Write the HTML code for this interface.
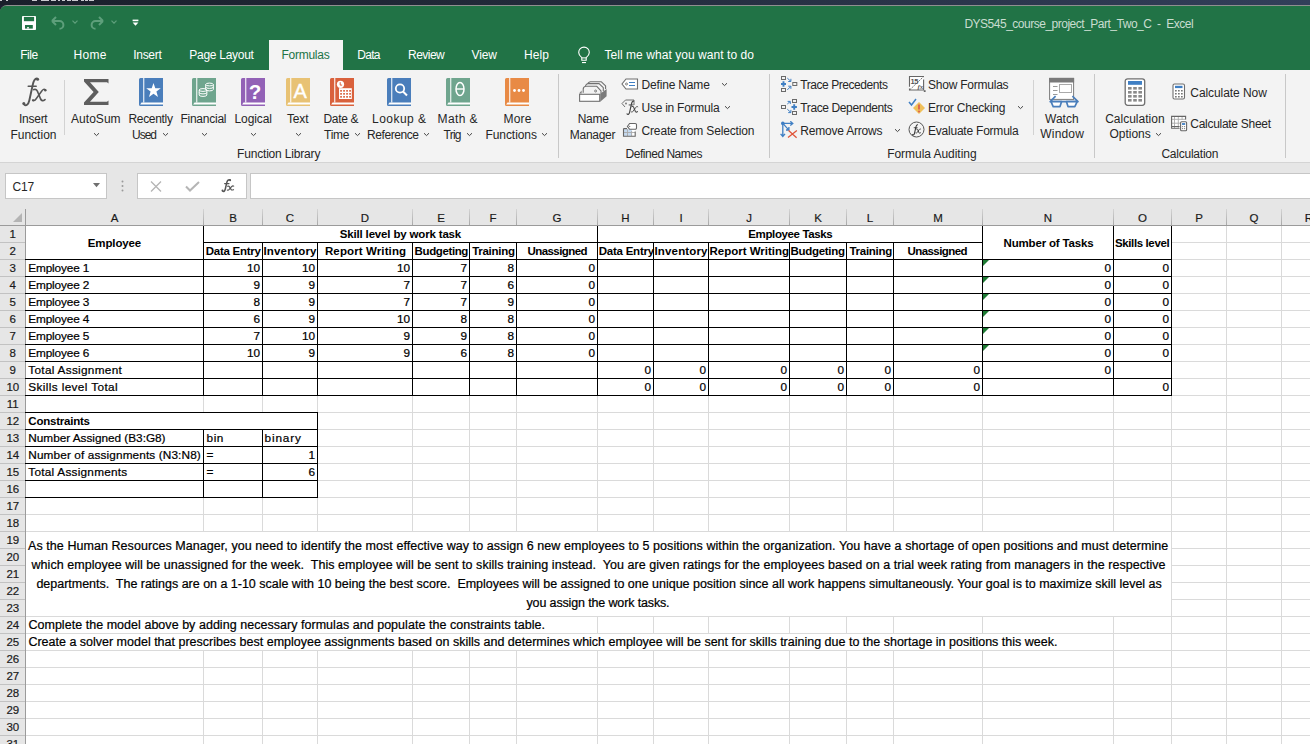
<!DOCTYPE html>
<html><head><meta charset="utf-8"><style>
html,body{margin:0;padding:0;}
body{width:1310px;height:744px;overflow:hidden;position:relative;background:#fff;font-family:"Liberation Sans",sans-serif;}
.t{position:absolute;white-space:pre;line-height:1;}
.r{position:absolute;display:block;}
</style></head><body>
<div class="r" style="left:0px;top:0px;width:1310px;height:5px;background:linear-gradient(90deg,#1a1f2b 0%,#222a3a 40%,#323f5a 100%);"></div>
<div class="r" style="left:0px;top:5px;width:12px;height:12px;background:#1b2030;"></div>
<div class="r" style="left:0;top:5px;width:1310px;height:65px;background:#217346;border-top:1px solid #8f8f8f;box-sizing:border-box;border-top-left-radius:7px;"></div>
<div class="r" style="left:0;top:6px;width:1310px;height:64px;background:#217346;border-top-left-radius:6px;"></div>
<div class="r" style="left:0px;top:0px;width:2px;height:1px;background:#c9c9cf;"></div>
<div class="r" style="left:6px;top:0px;width:2px;height:1px;background:#c9c9cf;"></div>
<div class="r" style="left:32px;top:0px;width:5px;height:1px;background:#c9c9cf;"></div>
<div class="r" style="left:41px;top:0px;width:8px;height:1px;background:#c9c9cf;"></div>
<div class="r" style="left:51px;top:0px;width:5px;height:1px;background:#c9c9cf;"></div>
<div class="r" style="left:58px;top:0px;width:2px;height:1px;background:#c9c9cf;"></div>
<div class="r" style="left:62px;top:0px;width:3px;height:1px;background:#c9c9cf;"></div>
<div class="r" style="left:67px;top:0px;width:4px;height:1px;background:#c9c9cf;"></div>
<div class="r" style="left:72px;top:0px;width:6px;height:1px;background:#c9c9cf;"></div>
<div class="r" style="left:81px;top:0px;width:3px;height:1px;background:#c9c9cf;"></div>
<div class="r" style="left:85px;top:0px;width:3px;height:1px;background:#c9c9cf;"></div>
<div class="r" style="left:89px;top:0px;width:5px;height:1px;background:#c9c9cf;"></div>
<svg class="r" style="left:22px;top:16px" width="14" height="14" viewBox="0 0 14 14"><rect x="0" y="0" width="14" height="14" rx="0.8" fill="#fff"/><rect x="1.9" y="0.9" width="10.2" height="4.3" fill="#217346"/><rect x="3" y="9" width="7.8" height="3.6" fill="#217346"/><rect x="5.2" y="11" width="1.6" height="1.6" fill="#fff"/></svg>
<svg class="r" style="left:50px;top:15px" width="16" height="15" viewBox="0 0 16 15"><path d="M2,6 L6,2 M2,6 L6,10 M2,6 H9.5 A3.9,3.9 0 0 1 9.5,13.8" fill="none" stroke="#5e9f7b" stroke-width="2"/></svg>
<svg class="r" style="left:72px;top:20px" width="6" height="4" viewBox="0 0 6 4"><path d="M0.5,0.7 L3,3.2 L5.5,0.7" fill="none" stroke="#5e9f7b" stroke-width="1.2"/></svg>
<svg class="r" style="left:89px;top:15px" width="16" height="15" viewBox="0 0 16 15"><path d="M14,6 L10,2 M14,6 L10,10 M14,6 H6.5 A3.9,3.9 0 0 0 6.5,13.8" fill="none" stroke="#5e9f7b" stroke-width="2"/></svg>
<svg class="r" style="left:111px;top:20px" width="6" height="4" viewBox="0 0 6 4"><path d="M0.5,0.7 L3,3.2 L5.5,0.7" fill="none" stroke="#5e9f7b" stroke-width="1.2"/></svg>
<svg class="r" style="left:132px;top:19px" width="7" height="8" viewBox="0 0 7 8"><rect x="0.6" y="0.6" width="5.8" height="1.6" fill="#fff"/><path d="M0.6,3.4 H6.4 L3.5,6.8 Z" fill="#fff"/></svg>
<div class="t" style="top:18.34px;font-size:12px;color:#c9ddd0;letter-spacing:-0.492px;left:964.40px;">DYS545_course_project_Part_Two_C  -  Excel</div>
<div class="r" style="left:269px;top:40px;width:74px;height:30px;background:#f3f3f3;"></div>
<div class="t" style="top:48.84px;font-size:12px;color:#ffffff;letter-spacing:-0.479px;left:20.20px;">File</div>
<div class="t" style="top:48.84px;font-size:12px;color:#ffffff;letter-spacing:0.330px;left:73.40px;">Home</div>
<div class="t" style="top:48.84px;font-size:12px;color:#ffffff;letter-spacing:-0.282px;left:133.20px;">Insert</div>
<div class="t" style="top:48.84px;font-size:12px;color:#ffffff;letter-spacing:-0.279px;left:189.30px;">Page Layout</div>
<div class="t" style="top:48.84px;font-size:12px;color:#217346;letter-spacing:-0.245px;left:281.40px;">Formulas</div>
<div class="t" style="top:48.84px;font-size:12px;color:#ffffff;letter-spacing:-0.683px;left:357.20px;">Data</div>
<div class="t" style="top:48.84px;font-size:12px;color:#ffffff;letter-spacing:-0.529px;left:408.00px;">Review</div>
<div class="t" style="top:48.84px;font-size:12px;color:#ffffff;letter-spacing:-0.131px;left:471.60px;">View</div>
<div class="t" style="top:48.84px;font-size:12px;color:#ffffff;letter-spacing:0.073px;left:524.00px;">Help</div>
<svg class="r" style="left:578px;top:46px" width="12" height="18" viewBox="0 0 12 18"><path d="M3.8,14.2 V11.7 C2,10.2 0.7,8.6 0.7,6.4 A5.3,5.3 0 0 1 11.3,6.4 C11.3,8.6 10,10.2 8.2,11.7 V14.2 Z" stroke="#fff" stroke-width="1.1" fill="none"/><path d="M3.8,11.9 H8.2" stroke="#fff" stroke-width="1"/><rect x="4" y="16" width="4" height="1.1" fill="#fff"/></svg>
<div class="t" style="top:48.84px;font-size:12px;color:#ffffff;letter-spacing:0.058px;left:604.40px;">Tell me what you want to do</div>
<div class="r" style="left:0px;top:70px;width:1310px;height:92px;background:#f3f3f3;"></div>
<div class="r" style="left:0px;top:162px;width:1310px;height:1px;background:#d4d4d4;"></div>
<div class="r" style="left:0px;top:163px;width:1310px;height:46px;background:#e6e6e6;"></div>
<div class="r" style="left:64px;top:80px;width:1px;height:55px;background:#d2d2d2;"></div>
<div class="r" style="left:558px;top:74px;width:1px;height:84px;background:#c8c8c8;"></div>
<div class="r" style="left:769px;top:74px;width:1px;height:84px;background:#c8c8c8;"></div>
<div class="r" style="left:1285px;top:74px;width:1px;height:84px;background:#c8c8c8;"></div>
<div class="r" style="left:1094px;top:74px;width:1px;height:84px;background:#c8c8c8;"></div>
<div class="r" style="left:1033px;top:80px;width:1px;height:55px;background:#d2d2d2;"></div>
<svg class="r" style="left:21px;top:77px" width="27" height="30" viewBox="0 0 27 30"><g fill="none" stroke="#555" stroke-linecap="round"><path d="M3,27.3 C5,29.3 7.3,27.8 8.3,23.5 L11.6,8.5 C12.6,3.5 14,1.2 16.2,1.6" stroke-width="1.9"/><path d="M7.2,9.3 H15.2" stroke-width="1.5"/><path d="M12.8,12.6 C15,11.6 16.2,13 17.2,16 L19.6,22 C20.6,24 22,24.2 24,22.6" stroke-width="1.7"/><path d="M24.6,13 C23.2,11.8 22,12.2 20.6,14.2 L15,22 C14,23.4 13,24 11.6,23.2" stroke-width="1.5"/></g><circle cx="2.8" cy="26.6" r="1.5" fill="#555"/><circle cx="16.6" cy="2.3" r="1.5" fill="#555"/><circle cx="24.3" cy="13.3" r="1.2" fill="#555"/><circle cx="12.2" cy="23.4" r="1.1" fill="#555"/></svg>
<div class="t" style="top:112.84px;font-size:12px;color:#262626;letter-spacing:-0.262px;left:19.00px;">Insert</div>
<div class="t" style="top:128.84px;font-size:12px;color:#262626;letter-spacing:0.010px;left:10.40px;">Function</div>
<svg class="r" style="left:84px;top:79px" width="25" height="26" viewBox="0 0 25 26"><path d="M0,0 H24.5 V4.5 L23,3.2 H6 L14.8,13 L6,22.8 H23 L24.5,21.5 V26 H0 V23.6 L9.6,13 L0,2.4 Z" fill="#5e5e5e"/></svg>
<div class="t" style="top:112.84px;font-size:12px;color:#262626;letter-spacing:0.040px;left:71.00px;">AutoSum</div>
<svg class="r" style="left:93px;top:132px" width="7" height="5" viewBox="0 0 7 5"><path d="M1,1.2 L3.5,3.6 L6,1.2" fill="none" stroke="#444" stroke-width="1"/></svg>
<svg class="r" style="left:139px;top:78px" width="24" height="28" viewBox="0 0 24 28"><path d="M1.5,0 H24 V28 H1.5 A1.5,1.5 0 0 1 0,26.5 V1.5 A1.5,1.5 0 0 1 1.5,0 Z" fill="#4a7ebb"/><rect x="4.2" y="0" width="1.1" height="24.5" fill="#fff" opacity="0.95"/><path d="M2.5,24.5 H24 V26.5 H1.2 Z" fill="#fff"/><path d="M14.5,5 L16.3,10.3 H21.8 L17.4,13.6 L19,19 L14.5,15.7 L10,19 L11.6,13.6 L7.2,10.3 H12.7 Z" fill="#fff"/></svg>
<div class="t" style="top:112.84px;font-size:12px;color:#262626;letter-spacing:-0.298px;left:128.40px;">Recently</div>
<div class="t" style="top:128.84px;font-size:12px;color:#262626;letter-spacing:-1.005px;left:132.00px;">Used</div>
<svg class="r" style="left:162px;top:132px" width="7" height="5" viewBox="0 0 7 5"><path d="M1,1.2 L3.5,3.6 L6,1.2" fill="none" stroke="#444" stroke-width="1"/></svg>
<svg class="r" style="left:192px;top:78px" width="24" height="28" viewBox="0 0 24 28"><path d="M1.5,0 H24 V28 H1.5 A1.5,1.5 0 0 1 0,26.5 V1.5 A1.5,1.5 0 0 1 1.5,0 Z" fill="#6fa58e"/><rect x="4.2" y="0" width="1.1" height="24.5" fill="#fff" opacity="0.95"/><path d="M2.5,24.5 H24 V26.5 H1.2 Z" fill="#fff"/><g fill="none" stroke="#fff" stroke-width="1"><ellipse cx="11" cy="12" rx="3.8" ry="1.4"/><path d="M7.2,12 V17 A3.8,1.4 0 0 0 14.8,17 V12 M7.2,14.5 A3.8,1.4 0 0 0 14.8,14.5"/><ellipse cx="17.5" cy="6.5" rx="3.8" ry="1.4"/><path d="M13.7,6.5 V11.5 A3.8,1.4 0 0 0 21.3,11.5 V6.5 M13.7,9 A3.8,1.4 0 0 0 21.3,9"/></g></svg>
<div class="t" style="top:112.84px;font-size:12px;color:#262626;letter-spacing:-0.241px;left:180.40px;">Financial</div>
<svg class="r" style="left:201px;top:132px" width="7" height="5" viewBox="0 0 7 5"><path d="M1,1.2 L3.5,3.6 L6,1.2" fill="none" stroke="#444" stroke-width="1"/></svg>
<svg class="r" style="left:241px;top:78px" width="24" height="28" viewBox="0 0 24 28"><path d="M1.5,0 H24 V28 H1.5 A1.5,1.5 0 0 1 0,26.5 V1.5 A1.5,1.5 0 0 1 1.5,0 Z" fill="#9261b6"/><rect x="4.2" y="0" width="1.1" height="24.5" fill="#fff" opacity="0.95"/><path d="M2.5,24.5 H24 V26.5 H1.2 Z" fill="#fff"/><text x="14" y="20.7" font-family="Liberation Sans" font-weight="bold" font-size="20.5" fill="#fff" text-anchor="middle">?</text></svg>
<div class="t" style="top:112.84px;font-size:12px;color:#262626;letter-spacing:-0.088px;left:234.50px;">Logical</div>
<svg class="r" style="left:250px;top:132px" width="7" height="5" viewBox="0 0 7 5"><path d="M1,1.2 L3.5,3.6 L6,1.2" fill="none" stroke="#444" stroke-width="1"/></svg>
<svg class="r" style="left:286px;top:78px" width="24" height="28" viewBox="0 0 24 28"><path d="M1.5,0 H24 V28 H1.5 A1.5,1.5 0 0 1 0,26.5 V1.5 A1.5,1.5 0 0 1 1.5,0 Z" fill="#e8c274"/><rect x="4.2" y="0" width="1.1" height="24.5" fill="#fff" opacity="0.95"/><path d="M2.5,24.5 H24 V26.5 H1.2 Z" fill="#fff"/><text x="14.2" y="20" font-family="Liberation Sans" font-size="20" stroke="#fff" stroke-width="0.4" fill="#fff" text-anchor="middle">A</text></svg>
<div class="t" style="top:112.84px;font-size:12px;color:#262626;letter-spacing:-0.169px;left:287.00px;">Text</div>
<svg class="r" style="left:295px;top:132px" width="7" height="5" viewBox="0 0 7 5"><path d="M1,1.2 L3.5,3.6 L6,1.2" fill="none" stroke="#444" stroke-width="1"/></svg>
<svg class="r" style="left:330px;top:78px" width="24" height="28" viewBox="0 0 24 28"><path d="M1.5,0 H24 V28 H1.5 A1.5,1.5 0 0 1 0,26.5 V1.5 A1.5,1.5 0 0 1 1.5,0 Z" fill="#d9613c"/><rect x="4.2" y="0" width="1.1" height="24.5" fill="#fff" opacity="0.95"/><path d="M2.5,24.5 H24 V26.5 H1.2 Z" fill="#fff"/><circle cx="10.5" cy="6.3" r="3.6" fill="#fff"/><path d="M10.2,4.2 V7.1 H12.1" stroke="#d9613c" stroke-width="1" fill="none"/><rect x="9" y="10.2" width="12.8" height="10.8" fill="#fff"/><g fill="#d9613c"><rect x="10.2" y="12" width="1.7" height="1.7"/><rect x="13.2" y="12" width="1.7" height="1.7"/><rect x="16.2" y="12" width="1.7" height="1.7"/><rect x="19.2" y="12" width="1.7" height="1.7"/><rect x="10.2" y="15" width="1.7" height="1.7"/><rect x="13.2" y="15" width="1.7" height="1.7"/><rect x="16.2" y="15" width="1.7" height="1.7"/><rect x="19.2" y="15" width="1.7" height="1.7"/><rect x="10.2" y="18" width="1.7" height="1.7"/><rect x="13.2" y="18" width="1.7" height="1.7"/><rect x="16.2" y="18" width="1.7" height="1.7"/><rect x="19.2" y="18" width="1.7" height="1.7"/></g></svg>
<div class="t" style="top:112.84px;font-size:12px;color:#262626;letter-spacing:-0.337px;left:323.50px;">Date &amp;</div>
<div class="t" style="top:128.84px;font-size:12px;color:#262626;letter-spacing:-0.241px;left:324.00px;">Time</div>
<svg class="r" style="left:354px;top:132px" width="7" height="5" viewBox="0 0 7 5"><path d="M1,1.2 L3.5,3.6 L6,1.2" fill="none" stroke="#444" stroke-width="1"/></svg>
<svg class="r" style="left:387px;top:78px" width="24" height="28" viewBox="0 0 24 28"><path d="M1.5,0 H24 V28 H1.5 A1.5,1.5 0 0 1 0,26.5 V1.5 A1.5,1.5 0 0 1 1.5,0 Z" fill="#4a7ebb"/><rect x="4.2" y="0" width="1.1" height="24.5" fill="#fff" opacity="0.95"/><path d="M2.5,24.5 H24 V26.5 H1.2 Z" fill="#fff"/><circle cx="13" cy="10.5" r="4.2" fill="none" stroke="#fff" stroke-width="1.8"/><path d="M16,13.5 L20,17.5" stroke="#fff" stroke-width="2"/></svg>
<div class="t" style="top:112.84px;font-size:12px;color:#262626;letter-spacing:0.470px;left:372.00px;">Lookup &amp;</div>
<div class="t" style="top:128.84px;font-size:12px;color:#262626;letter-spacing:-0.421px;left:367.00px;">Reference</div>
<svg class="r" style="left:423px;top:132px" width="7" height="5" viewBox="0 0 7 5"><path d="M1,1.2 L3.5,3.6 L6,1.2" fill="none" stroke="#444" stroke-width="1"/></svg>
<svg class="r" style="left:446px;top:78px" width="24" height="28" viewBox="0 0 24 28"><path d="M1.5,0 H24 V28 H1.5 A1.5,1.5 0 0 1 0,26.5 V1.5 A1.5,1.5 0 0 1 1.5,0 Z" fill="#6fa58e"/><rect x="4.2" y="0" width="1.1" height="24.5" fill="#fff" opacity="0.95"/><path d="M2.5,24.5 H24 V26.5 H1.2 Z" fill="#fff"/><ellipse cx="14" cy="11" rx="4" ry="6.5" fill="none" stroke="#fff" stroke-width="1.5"/><rect x="10" y="10.3" width="8" height="1.4" fill="#fff"/></svg>
<div class="t" style="top:112.84px;font-size:12px;color:#262626;letter-spacing:0.397px;left:437.50px;">Math &amp;</div>
<div class="t" style="top:128.84px;font-size:12px;color:#262626;letter-spacing:-0.741px;left:443.50px;">Trig</div>
<svg class="r" style="left:466px;top:132px" width="7" height="5" viewBox="0 0 7 5"><path d="M1,1.2 L3.5,3.6 L6,1.2" fill="none" stroke="#444" stroke-width="1"/></svg>
<svg class="r" style="left:505px;top:78px" width="24" height="28" viewBox="0 0 24 28"><path d="M1.5,0 H24 V28 H1.5 A1.5,1.5 0 0 1 0,26.5 V1.5 A1.5,1.5 0 0 1 1.5,0 Z" fill="#e88a45"/><rect x="4.2" y="0" width="1.1" height="24.5" fill="#fff" opacity="0.95"/><path d="M2.5,24.5 H24 V26.5 H1.2 Z" fill="#fff"/><circle cx="9.5" cy="12.5" r="1.4" fill="#fff"/><circle cx="14" cy="12.5" r="1.4" fill="#fff"/><circle cx="18.5" cy="12.5" r="1.4" fill="#fff"/></svg>
<div class="t" style="top:112.84px;font-size:12px;color:#262626;letter-spacing:0.220px;left:503.50px;">More</div>
<div class="t" style="top:128.84px;font-size:12px;color:#262626;letter-spacing:-0.053px;left:485.40px;">Functions</div>
<svg class="r" style="left:541px;top:132px" width="7" height="5" viewBox="0 0 7 5"><path d="M1,1.2 L3.5,3.6 L6,1.2" fill="none" stroke="#444" stroke-width="1"/></svg>
<div class="t" style="top:147.84px;font-size:12px;color:#262626;letter-spacing:-0.176px;left:237.00px;">Function Library</div>
<svg class="r" style="left:578px;top:80px" width="30" height="22" viewBox="0 0 30 22"><g fill="#f3f3f3" stroke="#707070" stroke-width="1.1" stroke-linejoin="round"><path d="M9.8,8 V5 A3,3 0 0 1 12.4,1.8 H23.4 L27.6,5.8 V9"/><path d="M7.5,10 V7 A3,3 0 0 1 10.1,3.6 H21.1 L25.3,7.6 V11"/><path d="M5.2,12.7 V9.4 A3,3 0 0 1 7.8,6.3 H18.8 L23,10.8 V13.5"/></g><circle cx="17.6" cy="11" r="1" fill="none" stroke="#707070" stroke-width="0.9"/><rect x="1.6" y="14.3" width="20.1" height="7" fill="#fff" stroke="#707070" stroke-width="1.1"/><path d="M22.2,13.8 L28.6,9 V16.3 L22.2,21.8 Z" fill="#7a7a7a"/><path d="M1.1,13.5 L3.6,10.6 V13.5 Z" fill="#7a7a7a"/></svg>
<div class="t" style="top:112.84px;font-size:12px;color:#262626;letter-spacing:-0.237px;left:577.70px;">Name</div>
<div class="t" style="top:128.84px;font-size:12px;color:#262626;letter-spacing:-0.277px;left:569.80px;">Manager</div>
<svg class="r" style="left:621px;top:78px" width="18" height="12" viewBox="0 0 18 12"><path d="M5,1 H16.5 V11 H5 L1,6 Z" fill="#fff" stroke="#6f6f6f" stroke-width="1.1"/><circle cx="5.5" cy="6" r="1" fill="none" stroke="#6f6f6f" stroke-width="0.9"/><path d="M8,4.5 H14 M8,7.5 H14" stroke="#3f7fc4" stroke-width="1.2"/></svg>
<div class="t" style="top:79.24px;font-size:12px;color:#262626;letter-spacing:-0.173px;left:641.50px;">Define Name</div>
<svg class="r" style="left:721px;top:82px" width="7" height="5" viewBox="0 0 7 5"><path d="M1,1.2 L3.5,3.6 L6,1.2" fill="none" stroke="#444" stroke-width="1"/></svg>
<svg class="r" style="left:621px;top:99px" width="18" height="17" viewBox="0 0 18 17"><path d="M4.5,1 H13 V6 M4,8 L1,4.5 L4.5,1" fill="none" stroke="#6f6f6f" stroke-width="1"/><circle cx="5" cy="4.5" r="0.9" fill="#6f6f6f"/></svg>
<svg class="r" style="left:624px;top:100px" width="15" height="16" viewBox="0 0 15 16"><g transform="translate(1.5,0.3) scale(0.5)"><g fill="none" stroke="#444" stroke-linecap="round"><path d="M3,27.3 C5,29.3 7.3,27.8 8.3,23.5 L11.6,8.5 C12.6,3.5 14,1.2 16.2,1.6" stroke-width="2.32"/><path d="M7.2,9.3 H15.2" stroke-width="1.83"/><path d="M12.8,12.6 C15,11.6 16.2,13 17.2,16 L19.6,22 C20.6,24 22,24.2 24,22.6" stroke-width="2.08"/><path d="M24.6,13 C23.2,11.8 22,12.2 20.6,14.2 L15,22 C14,23.4 13,24 11.6,23.2" stroke-width="1.83"/></g></g></svg>
<div class="t" style="top:101.84px;font-size:12px;color:#262626;letter-spacing:-0.251px;left:641.50px;">Use in Formula</div>
<svg class="r" style="left:724px;top:105px" width="7" height="5" viewBox="0 0 7 5"><path d="M1,1.2 L3.5,3.6 L6,1.2" fill="none" stroke="#444" stroke-width="1"/></svg>
<svg class="r" style="left:622px;top:122px" width="16" height="16" viewBox="0 0 16 16"><rect x="1.5" y="6.8" width="11.6" height="7.4" fill="#fff"/><rect x="1.9" y="7.2" width="8" height="6.6" fill="#c5daf0"/><path d="M5.5,7 V14 M9.6,9 V14 M2,10.5 H13" stroke="#aaa" stroke-width="0.9"/><path d="M1.5,6.5 V14.2 H13.2 V9.5 M1.5,6.6 H5" fill="none" stroke="#666" stroke-width="1.1"/><path d="M7.6,1.5 H13.2 A1.3,1.3 0 0 1 14.5,2.8 V6 A1.3,1.3 0 0 1 13.2,7.3 H7.6 L5.4,4.4 Z" fill="#fff" stroke="#666" stroke-width="1.1"/><circle cx="7.7" cy="4.4" r="0.6" fill="#666"/></svg>
<div class="t" style="top:124.64px;font-size:12px;color:#262626;letter-spacing:-0.153px;left:641.50px;">Create from Selection</div>
<div class="t" style="top:147.84px;font-size:12px;color:#262626;letter-spacing:-0.484px;left:625.60px;">Defined Names</div>
<svg class="r" style="left:780px;top:75px" width="18" height="18" viewBox="0 0 18 18"><g fill="none" stroke="#6a6a6a" stroke-width="1"><rect x="1.5" y="1.5" width="4" height="3"/><rect x="1.5" y="13.5" width="4" height="3"/><rect x="12.8" y="7.5" width="4" height="3"/></g><path d="M3.5,6.3 V11.7 M1,9 H6" stroke="#3f7fc4" stroke-width="1.9"/><g fill="none" stroke="#3f7fc4" stroke-width="1"><path d="M7.3,3.1 L10.9,6.4 M8.2,6.5 H10.9 V3.8"/><path d="M7.3,14.9 L10.9,11.3 M8.2,11.2 H10.9 V13.9"/></g></svg>
<div class="t" style="top:79.24px;font-size:12px;color:#262626;letter-spacing:-0.445px;left:800.30px;">Trace Precedents</div>
<svg class="r" style="left:780px;top:98px" width="18" height="18" viewBox="0 0 18 18"><g fill="none" stroke="#6a6a6a" stroke-width="1"><rect x="1.5" y="7.5" width="4" height="3"/><rect x="12.5" y="1.5" width="4" height="3"/><rect x="12.5" y="13.5" width="4" height="3"/></g><path d="M14.2,6.3 V11.7 M11.5,9 H16.9" stroke="#3f7fc4" stroke-width="1.9"/><g fill="none" stroke="#3f7fc4" stroke-width="1"><path d="M7.3,6 L10.1,3.6 M7.6,3.4 H10.3 V6"/><path d="M7.3,11.2 L10.9,14.5 M8.2,14.6 H10.9 V11.9"/></g></svg>
<div class="t" style="top:102.34px;font-size:12px;color:#262626;letter-spacing:-0.385px;left:800.30px;">Trace Dependents</div>
<svg class="r" style="left:780px;top:121px" width="18" height="18" viewBox="0 0 18 18"><circle cx="2.8" cy="2.4" r="1.8" fill="#3f7fc4"/><g fill="none" stroke="#3f7fc4" stroke-width="1.3"><path d="M2.8,2.4 V15.5 M0.6,12.8 L2.8,15.5 L5,12.8"/><path d="M2.8,2.4 H12.8 M10.3,0.3 L12.8,2.4 L10.3,4.5"/><path d="M2.8,2.4 L8.7,8.9 M8.9,6 V9 H6"/></g><path d="M8,16.5 L16.9,9.4 M8.6,9.6 L16.6,16.7" stroke="#e0553a" stroke-width="1.3"/></svg>
<div class="t" style="top:125.14px;font-size:12px;color:#262626;letter-spacing:-0.208px;left:800.30px;">Remove Arrows</div>
<svg class="r" style="left:894px;top:128px" width="7" height="5" viewBox="0 0 7 5"><path d="M1,1.2 L3.5,3.6 L6,1.2" fill="none" stroke="#444" stroke-width="1"/></svg>
<svg class="r" style="left:908px;top:75px" width="18" height="18" viewBox="0 0 18 18"><rect x="1.5" y="1.5" width="14.1" height="13.5" fill="#fff"/><path d="M1.5,11.8 V1.5 H16" fill="none" stroke="#666" stroke-width="1.1"/><path d="M15.6,4.5 V15 H1.5 V13.5" fill="none" stroke="#666" stroke-width="1.1"/><path d="M1.8,14.8 L16,1.2" stroke="#666" stroke-width="1" stroke-dasharray="1.6,1"/><text x="2.6" y="9.2" font-family="Liberation Sans" font-weight="bold" font-size="7.5" fill="#555" letter-spacing="-0.6">15</text><text x="9.5" y="14" font-family="Liberation Serif" font-style="italic" font-weight="bold" font-size="7" fill="#555">fx</text><rect x="15.8" y="15.2" width="1.8" height="1.8" fill="#666"/></svg>
<div class="t" style="top:79.24px;font-size:12px;color:#262626;letter-spacing:-0.230px;left:928.00px;">Show Formulas</div>
<svg class="r" style="left:908px;top:98px" width="18" height="17" viewBox="0 0 18 17"><path d="M1,4 L3.5,7 L8,1" fill="none" stroke="#3f7fc4" stroke-width="1.5"/><path d="M11,4 L17,10 L11,16 L5,10 Z" fill="#f0c05a"/><rect x="10.2" y="6.5" width="1.6" height="5" fill="#d9534f"/><rect x="10.2" y="12.7" width="1.6" height="1.6" fill="#d9534f"/></svg>
<div class="t" style="top:102.34px;font-size:12px;color:#262626;letter-spacing:-0.202px;left:928.00px;">Error Checking</div>
<svg class="r" style="left:1017px;top:105px" width="7" height="5" viewBox="0 0 7 5"><path d="M1,1.2 L3.5,3.6 L6,1.2" fill="none" stroke="#444" stroke-width="1"/></svg>
<svg class="r" style="left:908px;top:121px" width="17" height="17" viewBox="0 0 17 17"><circle cx="8.5" cy="8.5" r="7.5" fill="none" stroke="#555" stroke-width="1"/><g transform="translate(3.4,3.2) scale(0.38)"><g fill="none" stroke="#333" stroke-linecap="round"><path d="M3,27.3 C5,29.3 7.3,27.8 8.3,23.5 L11.6,8.5 C12.6,3.5 14,1.2 16.2,1.6" stroke-width="2.75"/><path d="M7.2,9.3 H15.2" stroke-width="2.17"/><path d="M12.8,12.6 C15,11.6 16.2,13 17.2,16 L19.6,22 C20.6,24 22,24.2 24,22.6" stroke-width="2.46"/><path d="M24.6,13 C23.2,11.8 22,12.2 20.6,14.2 L15,22 C14,23.4 13,24 11.6,23.2" stroke-width="2.17"/></g></g></svg>
<div class="t" style="top:125.14px;font-size:12px;color:#262626;letter-spacing:-0.223px;left:928.00px;">Evaluate Formula</div>
<div class="t" style="top:147.84px;font-size:12px;color:#262626;letter-spacing:-0.043px;left:887.20px;">Formula Auditing</div>
<svg class="r" style="left:1048px;top:77px" width="32" height="31" viewBox="0 0 32 31"><rect x="1.6" y="1.4" width="24" height="21" fill="#fff" stroke="#7a7a7a" stroke-width="1"/><rect x="1.1" y="0.9" width="25" height="4.6" fill="#7a7a7a"/><path d="M5,9.5 H9.5 M5,13.5 H9.5 M5,17.5 H9.5" stroke="#9a9a9a" stroke-width="1"/><rect x="11.5" y="7.5" width="12" height="8" fill="#fff" stroke="#aaa" stroke-width="1"/><g stroke="#4a7ebb" stroke-width="1.7" stroke-linejoin="round"><path d="M7.6,19.2 L2.2,24.6 H30 L24.4,19.2" fill="none"/><path d="M3,24.6 L5.2,29.6 H12 L13.6,24.6 Z" fill="#fff"/><path d="M18.4,24.6 L20,29.6 H26.8 L29.2,24.6 Z" fill="#fff"/></g></svg>
<div class="t" style="top:112.84px;font-size:12px;color:#262626;letter-spacing:0.034px;left:1045.00px;">Watch</div>
<div class="t" style="top:128.34px;font-size:12px;color:#262626;letter-spacing:0.184px;left:1040.30px;">Window</div>
<svg class="r" style="left:1124px;top:78px" width="22" height="28" viewBox="0 0 22 28"><rect x="1.2" y="0.8" width="19.5" height="26.5" rx="2.5" fill="#fff" stroke="#6f6f6f" stroke-width="1.3"/><rect x="4" y="3" width="14" height="3.8" fill="#3f7fc4"/><g fill="#8a8a8a"><rect x="4" y="9" width="3.6" height="2.6"/><rect x="9.2" y="9" width="3.6" height="2.6"/><rect x="14.4" y="9" width="3.6" height="2.6"/><rect x="4" y="13" width="3.6" height="2.6"/><rect x="9.2" y="13" width="3.6" height="2.6"/><rect x="14.4" y="13" width="3.6" height="2.6"/><rect x="4" y="17" width="3.6" height="2.6"/><rect x="9.2" y="17" width="3.6" height="2.6"/><rect x="14.4" y="17" width="3.6" height="2.6"/><rect x="4" y="21" width="3.6" height="2.6"/><rect x="9.2" y="21" width="3.6" height="2.6"/><rect x="14.4" y="21" width="3.6" height="2.6"/></g></svg>
<div class="t" style="top:112.84px;font-size:12px;color:#262626;left:1105.20px;">Calculation</div>
<div class="t" style="top:128.34px;font-size:12px;color:#262626;letter-spacing:-0.026px;left:1109.50px;">Options</div>
<svg class="r" style="left:1155px;top:132px" width="7" height="5" viewBox="0 0 7 5"><path d="M1,1.2 L3.5,3.6 L6,1.2" fill="none" stroke="#444" stroke-width="1"/></svg>
<svg class="r" style="left:1172px;top:83px" width="14" height="17" viewBox="0 0 14 17"><rect x="1" y="1" width="11.5" height="15" rx="1.5" fill="#fff" stroke="#6f6f6f" stroke-width="1.1"/><rect x="3" y="2.8" width="7.5" height="2.3" fill="#3f7fc4"/><g fill="#777"><rect x="3" y="7" width="1.7" height="1.5"/><rect x="6" y="7" width="1.7" height="1.5"/><rect x="9" y="7" width="1.7" height="1.5"/><rect x="3" y="10" width="1.7" height="1.5"/><rect x="6" y="10" width="1.7" height="1.5"/><rect x="9" y="10" width="1.7" height="1.5"/><rect x="3" y="13" width="1.7" height="1.5"/><rect x="6" y="13" width="1.7" height="1.5"/><rect x="9" y="13" width="1.7" height="1.5"/></g></svg>
<div class="t" style="top:86.74px;font-size:12px;color:#262626;letter-spacing:-0.072px;left:1190.30px;">Calculate Now</div>
<svg class="r" style="left:1170px;top:115px" width="18" height="17" viewBox="0 0 18 17"><rect x="1.6" y="1.4" width="14" height="12" fill="#fff"/><path d="M4.5,1.5 V13 M8.3,1.5 V13 M12.1,1.5 V5 M1.6,4.3 H15.6 M1.6,8.2 H10" stroke="#aaa" stroke-width="0.9"/><path d="M15.6,4.6 V1.4 H1.6 V13.2 H9.6 M1.6,11.5 H9.6" fill="none" stroke="#666" stroke-width="1.1"/><rect x="10.6" y="6.7" width="6" height="9" rx="1" fill="#fff" stroke="#666" stroke-width="1.1"/><rect x="12" y="8.1" width="3.2" height="1.8" fill="#3f7fc4"/><g fill="#777"><circle cx="12.6" cy="11.6" r="0.6"/><circle cx="14.6" cy="11.6" r="0.6"/><circle cx="12.6" cy="13.6" r="0.6"/><circle cx="14.6" cy="13.6" r="0.6"/></g></svg>
<div class="t" style="top:117.64px;font-size:12px;color:#262626;letter-spacing:-0.287px;left:1190.30px;">Calculate Sheet</div>
<div class="t" style="top:147.84px;font-size:12px;color:#262626;letter-spacing:-0.227px;left:1161.40px;">Calculation</div>
<div class="r" style="left:5px;top:173px;width:102px;height:26px;background:#fff;box-sizing:border-box;border:1px solid #c6c6c6;"></div>
<div class="t" style="top:181.04px;font-size:12px;color:#262626;letter-spacing:-0.107px;left:12.40px;">C17</div>
<svg class="r" style="left:93px;top:183px" width="7" height="5" viewBox="0 0 7 5"><path d="M0,0 H7 L3.5,4.3 Z" fill="#6f6f6f"/></svg>
<svg class="r" style="left:121px;top:180px" width="3" height="12" viewBox="0 0 3 12"><circle cx="1.5" cy="1.5" r="1" fill="#9a9a9a"/><circle cx="1.5" cy="6" r="1" fill="#9a9a9a"/><circle cx="1.5" cy="10.5" r="1" fill="#9a9a9a"/></svg>
<div class="r" style="left:137px;top:173px;width:110px;height:26px;background:#fff;box-sizing:border-box;border:1px solid #c6c6c6;"></div>
<svg class="r" style="left:150px;top:181px" width="12" height="11" viewBox="0 0 12 11"><path d="M1,0.5 L11,10.5 M11,0.5 L1,10.5" stroke="#b5b5b5" stroke-width="1.3"/></svg>
<svg class="r" style="left:185px;top:181px" width="15" height="11" viewBox="0 0 15 11"><path d="M1,5.5 L5,9.5 L14,1" fill="none" stroke="#b5b5b5" stroke-width="2"/></svg>
<svg class="r" style="left:220px;top:178px" width="16" height="16" viewBox="0 0 16 16"><g fill="none" stroke="#555" stroke-linecap="round"><path d="M2.6,13 C3.6,14 4.7,13.4 5.3,11 L6.9,4.2 C7.4,2.2 8.4,1.5 10.2,1.9" stroke-width="1.5"/><path d="M4.6,5.6 H9" stroke-width="1.1"/><path d="M7.6,8.2 C8.6,7.7 9.3,8.3 9.9,9.5 L11,11.4 C11.5,12.1 12.3,12.2 13.5,11.7" stroke-width="1.2"/><path d="M13.7,8.1 C13,7.6 12.3,7.9 11.6,8.7 L9,11.7 C8.5,12.3 8,12.4 7.3,12" stroke-width="1.1"/></g><circle cx="2.5" cy="12.6" r="1" fill="#555"/><circle cx="10.1" cy="2.2" r="1" fill="#555"/></svg>
<div class="r" style="left:250px;top:173px;width:1070px;height:26px;background:#fff;box-sizing:border-box;border:1px solid #c6c6c6;"></div>
<div class="r" style="left:0px;top:209px;width:1310px;height:16px;background:#e6e6e6;"></div>
<div class="r" style="left:0px;top:225px;width:1310px;height:1px;background:#9b9b9b;"></div>
<div class="r" style="left:0px;top:226px;width:25px;height:518px;background:#e6e6e6;"></div>
<div class="r" style="left:25px;top:209px;width:1px;height:535px;background:#9b9b9b;"></div>
<svg class="r" style="left:13px;top:213px" width="9" height="9" viewBox="0 0 9 9"><path d="M9,0 V9 H0 Z" fill="#b4b4b4"/></svg>
<div class="r" style="left:203px;top:209px;width:1px;height:16px;background:linear-gradient(#d4d4d4,#a9a9a9);"></div>
<div class="r" style="left:262px;top:209px;width:1px;height:16px;background:linear-gradient(#d4d4d4,#a9a9a9);"></div>
<div class="r" style="left:317px;top:209px;width:1px;height:16px;background:linear-gradient(#d4d4d4,#a9a9a9);"></div>
<div class="r" style="left:412px;top:209px;width:1px;height:16px;background:linear-gradient(#d4d4d4,#a9a9a9);"></div>
<div class="r" style="left:469px;top:209px;width:1px;height:16px;background:linear-gradient(#d4d4d4,#a9a9a9);"></div>
<div class="r" style="left:516px;top:209px;width:1px;height:16px;background:linear-gradient(#d4d4d4,#a9a9a9);"></div>
<div class="r" style="left:597px;top:209px;width:1px;height:16px;background:linear-gradient(#d4d4d4,#a9a9a9);"></div>
<div class="r" style="left:653px;top:209px;width:1px;height:16px;background:linear-gradient(#d4d4d4,#a9a9a9);"></div>
<div class="r" style="left:708px;top:209px;width:1px;height:16px;background:linear-gradient(#d4d4d4,#a9a9a9);"></div>
<div class="r" style="left:789px;top:209px;width:1px;height:16px;background:linear-gradient(#d4d4d4,#a9a9a9);"></div>
<div class="r" style="left:846px;top:209px;width:1px;height:16px;background:linear-gradient(#d4d4d4,#a9a9a9);"></div>
<div class="r" style="left:893px;top:209px;width:1px;height:16px;background:linear-gradient(#d4d4d4,#a9a9a9);"></div>
<div class="r" style="left:982px;top:209px;width:1px;height:16px;background:linear-gradient(#d4d4d4,#a9a9a9);"></div>
<div class="r" style="left:1113px;top:209px;width:1px;height:16px;background:linear-gradient(#d4d4d4,#a9a9a9);"></div>
<div class="r" style="left:1171px;top:209px;width:1px;height:16px;background:linear-gradient(#d4d4d4,#a9a9a9);"></div>
<div class="r" style="left:1226px;top:209px;width:1px;height:16px;background:linear-gradient(#d4d4d4,#a9a9a9);"></div>
<div class="r" style="left:1281px;top:209px;width:1px;height:16px;background:linear-gradient(#d4d4d4,#a9a9a9);"></div>
<div class="t" style="top:212.97px;font-size:11.5px;color:#1a1a1a;-webkit-text-stroke:0.18px #1a1a1a;left:-485.50px;width:1200px;text-align:center;">A</div>
<div class="t" style="top:212.97px;font-size:11.5px;color:#1a1a1a;-webkit-text-stroke:0.18px #1a1a1a;left:-367.00px;width:1200px;text-align:center;">B</div>
<div class="t" style="top:212.97px;font-size:11.5px;color:#1a1a1a;-webkit-text-stroke:0.18px #1a1a1a;left:-310.00px;width:1200px;text-align:center;">C</div>
<div class="t" style="top:212.97px;font-size:11.5px;color:#1a1a1a;-webkit-text-stroke:0.18px #1a1a1a;left:-235.00px;width:1200px;text-align:center;">D</div>
<div class="t" style="top:212.97px;font-size:11.5px;color:#1a1a1a;-webkit-text-stroke:0.18px #1a1a1a;left:-159.00px;width:1200px;text-align:center;">E</div>
<div class="t" style="top:212.97px;font-size:11.5px;color:#1a1a1a;-webkit-text-stroke:0.18px #1a1a1a;left:-107.00px;width:1200px;text-align:center;">F</div>
<div class="t" style="top:212.97px;font-size:11.5px;color:#1a1a1a;-webkit-text-stroke:0.18px #1a1a1a;left:-43.00px;width:1200px;text-align:center;">G</div>
<div class="t" style="top:212.97px;font-size:11.5px;color:#1a1a1a;-webkit-text-stroke:0.18px #1a1a1a;left:25.50px;width:1200px;text-align:center;">H</div>
<div class="t" style="top:212.97px;font-size:11.5px;color:#1a1a1a;-webkit-text-stroke:0.18px #1a1a1a;left:81.00px;width:1200px;text-align:center;">I</div>
<div class="t" style="top:212.97px;font-size:11.5px;color:#1a1a1a;-webkit-text-stroke:0.18px #1a1a1a;left:149.00px;width:1200px;text-align:center;">J</div>
<div class="t" style="top:212.97px;font-size:11.5px;color:#1a1a1a;-webkit-text-stroke:0.18px #1a1a1a;left:218.00px;width:1200px;text-align:center;">K</div>
<div class="t" style="top:212.97px;font-size:11.5px;color:#1a1a1a;-webkit-text-stroke:0.18px #1a1a1a;left:270.00px;width:1200px;text-align:center;">L</div>
<div class="t" style="top:212.97px;font-size:11.5px;color:#1a1a1a;-webkit-text-stroke:0.18px #1a1a1a;left:338.00px;width:1200px;text-align:center;">M</div>
<div class="t" style="top:212.97px;font-size:11.5px;color:#1a1a1a;-webkit-text-stroke:0.18px #1a1a1a;left:448.00px;width:1200px;text-align:center;">N</div>
<div class="t" style="top:212.97px;font-size:11.5px;color:#1a1a1a;-webkit-text-stroke:0.18px #1a1a1a;left:542.50px;width:1200px;text-align:center;">O</div>
<div class="t" style="top:212.97px;font-size:11.5px;color:#1a1a1a;-webkit-text-stroke:0.18px #1a1a1a;left:599.00px;width:1200px;text-align:center;">P</div>
<div class="t" style="top:212.97px;font-size:11.5px;color:#1a1a1a;-webkit-text-stroke:0.18px #1a1a1a;left:654.00px;width:1200px;text-align:center;">Q</div>
<div class="t" style="top:212.97px;font-size:11.5px;color:#1a1a1a;-webkit-text-stroke:0.18px #1a1a1a;left:709.00px;width:1200px;text-align:center;">R</div>
<div class="r" style="left:0px;top:242px;width:25px;height:1px;background:#c2c2c2;"></div>
<div class="t" style="top:229.27px;font-size:11.5px;color:#1a1a1a;-webkit-text-stroke:0.18px #1a1a1a;left:-587.20px;width:1200px;text-align:center;">1</div>
<div class="r" style="left:0px;top:259px;width:25px;height:1px;background:#c2c2c2;"></div>
<div class="t" style="top:246.27px;font-size:11.5px;color:#1a1a1a;-webkit-text-stroke:0.18px #1a1a1a;left:-587.20px;width:1200px;text-align:center;">2</div>
<div class="r" style="left:0px;top:276px;width:25px;height:1px;background:#c2c2c2;"></div>
<div class="t" style="top:263.27px;font-size:11.5px;color:#1a1a1a;-webkit-text-stroke:0.18px #1a1a1a;left:-587.20px;width:1200px;text-align:center;">3</div>
<div class="r" style="left:0px;top:293px;width:25px;height:1px;background:#c2c2c2;"></div>
<div class="t" style="top:280.27px;font-size:11.5px;color:#1a1a1a;-webkit-text-stroke:0.18px #1a1a1a;left:-587.20px;width:1200px;text-align:center;">4</div>
<div class="r" style="left:0px;top:310px;width:25px;height:1px;background:#c2c2c2;"></div>
<div class="t" style="top:297.27px;font-size:11.5px;color:#1a1a1a;-webkit-text-stroke:0.18px #1a1a1a;left:-587.20px;width:1200px;text-align:center;">5</div>
<div class="r" style="left:0px;top:327px;width:25px;height:1px;background:#c2c2c2;"></div>
<div class="t" style="top:314.27px;font-size:11.5px;color:#1a1a1a;-webkit-text-stroke:0.18px #1a1a1a;left:-587.20px;width:1200px;text-align:center;">6</div>
<div class="r" style="left:0px;top:344px;width:25px;height:1px;background:#c2c2c2;"></div>
<div class="t" style="top:331.27px;font-size:11.5px;color:#1a1a1a;-webkit-text-stroke:0.18px #1a1a1a;left:-587.20px;width:1200px;text-align:center;">7</div>
<div class="r" style="left:0px;top:361px;width:25px;height:1px;background:#c2c2c2;"></div>
<div class="t" style="top:348.27px;font-size:11.5px;color:#1a1a1a;-webkit-text-stroke:0.18px #1a1a1a;left:-587.20px;width:1200px;text-align:center;">8</div>
<div class="r" style="left:0px;top:378px;width:25px;height:1px;background:#c2c2c2;"></div>
<div class="t" style="top:365.27px;font-size:11.5px;color:#1a1a1a;-webkit-text-stroke:0.18px #1a1a1a;left:-587.20px;width:1200px;text-align:center;">9</div>
<div class="r" style="left:0px;top:395px;width:25px;height:1px;background:#c2c2c2;"></div>
<div class="t" style="top:382.27px;font-size:11.5px;color:#1a1a1a;-webkit-text-stroke:0.18px #1a1a1a;left:-587.20px;width:1200px;text-align:center;">10</div>
<div class="r" style="left:0px;top:412px;width:25px;height:1px;background:#c2c2c2;"></div>
<div class="t" style="top:399.27px;font-size:11.5px;color:#1a1a1a;-webkit-text-stroke:0.18px #1a1a1a;left:-587.20px;width:1200px;text-align:center;">11</div>
<div class="r" style="left:0px;top:429px;width:25px;height:1px;background:#c2c2c2;"></div>
<div class="t" style="top:416.27px;font-size:11.5px;color:#1a1a1a;-webkit-text-stroke:0.18px #1a1a1a;left:-587.20px;width:1200px;text-align:center;">12</div>
<div class="r" style="left:0px;top:446px;width:25px;height:1px;background:#c2c2c2;"></div>
<div class="t" style="top:433.27px;font-size:11.5px;color:#1a1a1a;-webkit-text-stroke:0.18px #1a1a1a;left:-587.20px;width:1200px;text-align:center;">13</div>
<div class="r" style="left:0px;top:463px;width:25px;height:1px;background:#c2c2c2;"></div>
<div class="t" style="top:450.27px;font-size:11.5px;color:#1a1a1a;-webkit-text-stroke:0.18px #1a1a1a;left:-587.20px;width:1200px;text-align:center;">14</div>
<div class="r" style="left:0px;top:480px;width:25px;height:1px;background:#c2c2c2;"></div>
<div class="t" style="top:467.27px;font-size:11.5px;color:#1a1a1a;-webkit-text-stroke:0.18px #1a1a1a;left:-587.20px;width:1200px;text-align:center;">15</div>
<div class="r" style="left:0px;top:497px;width:25px;height:1px;background:#c2c2c2;"></div>
<div class="t" style="top:484.27px;font-size:11.5px;color:#1a1a1a;-webkit-text-stroke:0.18px #1a1a1a;left:-587.20px;width:1200px;text-align:center;">16</div>
<div class="r" style="left:0px;top:514px;width:25px;height:1px;background:#c2c2c2;"></div>
<div class="t" style="top:501.27px;font-size:11.5px;color:#1a1a1a;-webkit-text-stroke:0.18px #1a1a1a;left:-587.20px;width:1200px;text-align:center;">17</div>
<div class="r" style="left:0px;top:531px;width:25px;height:1px;background:#c2c2c2;"></div>
<div class="t" style="top:518.27px;font-size:11.5px;color:#1a1a1a;-webkit-text-stroke:0.18px #1a1a1a;left:-587.20px;width:1200px;text-align:center;">18</div>
<div class="r" style="left:0px;top:548px;width:25px;height:1px;background:#c2c2c2;"></div>
<div class="t" style="top:535.27px;font-size:11.5px;color:#1a1a1a;-webkit-text-stroke:0.18px #1a1a1a;left:-587.20px;width:1200px;text-align:center;">19</div>
<div class="r" style="left:0px;top:565px;width:25px;height:1px;background:#c2c2c2;"></div>
<div class="t" style="top:552.27px;font-size:11.5px;color:#1a1a1a;-webkit-text-stroke:0.18px #1a1a1a;left:-587.20px;width:1200px;text-align:center;">20</div>
<div class="r" style="left:0px;top:582px;width:25px;height:1px;background:#c2c2c2;"></div>
<div class="t" style="top:569.27px;font-size:11.5px;color:#1a1a1a;-webkit-text-stroke:0.18px #1a1a1a;left:-587.20px;width:1200px;text-align:center;">21</div>
<div class="r" style="left:0px;top:599px;width:25px;height:1px;background:#c2c2c2;"></div>
<div class="t" style="top:586.27px;font-size:11.5px;color:#1a1a1a;-webkit-text-stroke:0.18px #1a1a1a;left:-587.20px;width:1200px;text-align:center;">22</div>
<div class="r" style="left:0px;top:616px;width:25px;height:1px;background:#c2c2c2;"></div>
<div class="t" style="top:603.27px;font-size:11.5px;color:#1a1a1a;-webkit-text-stroke:0.18px #1a1a1a;left:-587.20px;width:1200px;text-align:center;">23</div>
<div class="r" style="left:0px;top:633px;width:25px;height:1px;background:#c2c2c2;"></div>
<div class="t" style="top:620.27px;font-size:11.5px;color:#1a1a1a;-webkit-text-stroke:0.18px #1a1a1a;left:-587.20px;width:1200px;text-align:center;">24</div>
<div class="r" style="left:0px;top:650px;width:25px;height:1px;background:#c2c2c2;"></div>
<div class="t" style="top:637.27px;font-size:11.5px;color:#1a1a1a;-webkit-text-stroke:0.18px #1a1a1a;left:-587.20px;width:1200px;text-align:center;">25</div>
<div class="r" style="left:0px;top:667px;width:25px;height:1px;background:#c2c2c2;"></div>
<div class="t" style="top:654.27px;font-size:11.5px;color:#1a1a1a;-webkit-text-stroke:0.18px #1a1a1a;left:-587.20px;width:1200px;text-align:center;">26</div>
<div class="r" style="left:0px;top:684px;width:25px;height:1px;background:#c2c2c2;"></div>
<div class="t" style="top:671.27px;font-size:11.5px;color:#1a1a1a;-webkit-text-stroke:0.18px #1a1a1a;left:-587.20px;width:1200px;text-align:center;">27</div>
<div class="r" style="left:0px;top:701px;width:25px;height:1px;background:#c2c2c2;"></div>
<div class="t" style="top:688.27px;font-size:11.5px;color:#1a1a1a;-webkit-text-stroke:0.18px #1a1a1a;left:-587.20px;width:1200px;text-align:center;">28</div>
<div class="r" style="left:0px;top:718px;width:25px;height:1px;background:#c2c2c2;"></div>
<div class="t" style="top:705.27px;font-size:11.5px;color:#1a1a1a;-webkit-text-stroke:0.18px #1a1a1a;left:-587.20px;width:1200px;text-align:center;">29</div>
<div class="r" style="left:0px;top:735px;width:25px;height:1px;background:#c2c2c2;"></div>
<div class="t" style="top:722.27px;font-size:11.5px;color:#1a1a1a;-webkit-text-stroke:0.18px #1a1a1a;left:-587.20px;width:1200px;text-align:center;">30</div>
<div class="r" style="left:0px;top:752px;width:25px;height:1px;background:#c2c2c2;"></div>
<div class="t" style="top:739.27px;font-size:11.5px;color:#1a1a1a;-webkit-text-stroke:0.18px #1a1a1a;left:-587.20px;width:1200px;text-align:center;">31</div>
<div class="r" style="left:26px;top:226px;width:1284px;height:518px;background:#fff"></div>
<div class="r" style="left:203px;top:226px;width:1px;height:16px;background:#dadada;"></div>
<div class="r" style="left:597px;top:226px;width:1px;height:16px;background:#dadada;"></div>
<div class="r" style="left:982px;top:226px;width:1px;height:16px;background:#dadada;"></div>
<div class="r" style="left:1113px;top:226px;width:1px;height:16px;background:#dadada;"></div>
<div class="r" style="left:1171px;top:226px;width:1px;height:16px;background:#dadada;"></div>
<div class="r" style="left:1226px;top:226px;width:1px;height:16px;background:#dadada;"></div>
<div class="r" style="left:1281px;top:226px;width:1px;height:16px;background:#dadada;"></div>
<div class="r" style="left:203px;top:242px;width:780px;height:1px;background:#dadada;"></div>
<div class="r" style="left:1171px;top:242px;width:139px;height:1px;background:#dadada;"></div>
<div class="r" style="left:203px;top:243px;width:1px;height:16px;background:#dadada;"></div>
<div class="r" style="left:262px;top:243px;width:1px;height:16px;background:#dadada;"></div>
<div class="r" style="left:317px;top:243px;width:1px;height:16px;background:#dadada;"></div>
<div class="r" style="left:412px;top:243px;width:1px;height:16px;background:#dadada;"></div>
<div class="r" style="left:469px;top:243px;width:1px;height:16px;background:#dadada;"></div>
<div class="r" style="left:516px;top:243px;width:1px;height:16px;background:#dadada;"></div>
<div class="r" style="left:597px;top:243px;width:1px;height:16px;background:#dadada;"></div>
<div class="r" style="left:653px;top:243px;width:1px;height:16px;background:#dadada;"></div>
<div class="r" style="left:708px;top:243px;width:1px;height:16px;background:#dadada;"></div>
<div class="r" style="left:789px;top:243px;width:1px;height:16px;background:#dadada;"></div>
<div class="r" style="left:846px;top:243px;width:1px;height:16px;background:#dadada;"></div>
<div class="r" style="left:893px;top:243px;width:1px;height:16px;background:#dadada;"></div>
<div class="r" style="left:982px;top:243px;width:1px;height:16px;background:#dadada;"></div>
<div class="r" style="left:1113px;top:243px;width:1px;height:16px;background:#dadada;"></div>
<div class="r" style="left:1171px;top:243px;width:1px;height:16px;background:#dadada;"></div>
<div class="r" style="left:1226px;top:243px;width:1px;height:16px;background:#dadada;"></div>
<div class="r" style="left:1281px;top:243px;width:1px;height:16px;background:#dadada;"></div>
<div class="r" style="left:26px;top:259px;width:1284px;height:1px;background:#dadada;"></div>
<div class="r" style="left:203px;top:260px;width:1px;height:16px;background:#dadada;"></div>
<div class="r" style="left:262px;top:260px;width:1px;height:16px;background:#dadada;"></div>
<div class="r" style="left:317px;top:260px;width:1px;height:16px;background:#dadada;"></div>
<div class="r" style="left:412px;top:260px;width:1px;height:16px;background:#dadada;"></div>
<div class="r" style="left:469px;top:260px;width:1px;height:16px;background:#dadada;"></div>
<div class="r" style="left:516px;top:260px;width:1px;height:16px;background:#dadada;"></div>
<div class="r" style="left:597px;top:260px;width:1px;height:16px;background:#dadada;"></div>
<div class="r" style="left:653px;top:260px;width:1px;height:16px;background:#dadada;"></div>
<div class="r" style="left:708px;top:260px;width:1px;height:16px;background:#dadada;"></div>
<div class="r" style="left:789px;top:260px;width:1px;height:16px;background:#dadada;"></div>
<div class="r" style="left:846px;top:260px;width:1px;height:16px;background:#dadada;"></div>
<div class="r" style="left:893px;top:260px;width:1px;height:16px;background:#dadada;"></div>
<div class="r" style="left:982px;top:260px;width:1px;height:16px;background:#dadada;"></div>
<div class="r" style="left:1113px;top:260px;width:1px;height:16px;background:#dadada;"></div>
<div class="r" style="left:1171px;top:260px;width:1px;height:16px;background:#dadada;"></div>
<div class="r" style="left:1226px;top:260px;width:1px;height:16px;background:#dadada;"></div>
<div class="r" style="left:1281px;top:260px;width:1px;height:16px;background:#dadada;"></div>
<div class="r" style="left:26px;top:276px;width:1284px;height:1px;background:#dadada;"></div>
<div class="r" style="left:203px;top:277px;width:1px;height:16px;background:#dadada;"></div>
<div class="r" style="left:262px;top:277px;width:1px;height:16px;background:#dadada;"></div>
<div class="r" style="left:317px;top:277px;width:1px;height:16px;background:#dadada;"></div>
<div class="r" style="left:412px;top:277px;width:1px;height:16px;background:#dadada;"></div>
<div class="r" style="left:469px;top:277px;width:1px;height:16px;background:#dadada;"></div>
<div class="r" style="left:516px;top:277px;width:1px;height:16px;background:#dadada;"></div>
<div class="r" style="left:597px;top:277px;width:1px;height:16px;background:#dadada;"></div>
<div class="r" style="left:653px;top:277px;width:1px;height:16px;background:#dadada;"></div>
<div class="r" style="left:708px;top:277px;width:1px;height:16px;background:#dadada;"></div>
<div class="r" style="left:789px;top:277px;width:1px;height:16px;background:#dadada;"></div>
<div class="r" style="left:846px;top:277px;width:1px;height:16px;background:#dadada;"></div>
<div class="r" style="left:893px;top:277px;width:1px;height:16px;background:#dadada;"></div>
<div class="r" style="left:982px;top:277px;width:1px;height:16px;background:#dadada;"></div>
<div class="r" style="left:1113px;top:277px;width:1px;height:16px;background:#dadada;"></div>
<div class="r" style="left:1171px;top:277px;width:1px;height:16px;background:#dadada;"></div>
<div class="r" style="left:1226px;top:277px;width:1px;height:16px;background:#dadada;"></div>
<div class="r" style="left:1281px;top:277px;width:1px;height:16px;background:#dadada;"></div>
<div class="r" style="left:26px;top:293px;width:1284px;height:1px;background:#dadada;"></div>
<div class="r" style="left:203px;top:294px;width:1px;height:16px;background:#dadada;"></div>
<div class="r" style="left:262px;top:294px;width:1px;height:16px;background:#dadada;"></div>
<div class="r" style="left:317px;top:294px;width:1px;height:16px;background:#dadada;"></div>
<div class="r" style="left:412px;top:294px;width:1px;height:16px;background:#dadada;"></div>
<div class="r" style="left:469px;top:294px;width:1px;height:16px;background:#dadada;"></div>
<div class="r" style="left:516px;top:294px;width:1px;height:16px;background:#dadada;"></div>
<div class="r" style="left:597px;top:294px;width:1px;height:16px;background:#dadada;"></div>
<div class="r" style="left:653px;top:294px;width:1px;height:16px;background:#dadada;"></div>
<div class="r" style="left:708px;top:294px;width:1px;height:16px;background:#dadada;"></div>
<div class="r" style="left:789px;top:294px;width:1px;height:16px;background:#dadada;"></div>
<div class="r" style="left:846px;top:294px;width:1px;height:16px;background:#dadada;"></div>
<div class="r" style="left:893px;top:294px;width:1px;height:16px;background:#dadada;"></div>
<div class="r" style="left:982px;top:294px;width:1px;height:16px;background:#dadada;"></div>
<div class="r" style="left:1113px;top:294px;width:1px;height:16px;background:#dadada;"></div>
<div class="r" style="left:1171px;top:294px;width:1px;height:16px;background:#dadada;"></div>
<div class="r" style="left:1226px;top:294px;width:1px;height:16px;background:#dadada;"></div>
<div class="r" style="left:1281px;top:294px;width:1px;height:16px;background:#dadada;"></div>
<div class="r" style="left:26px;top:310px;width:1284px;height:1px;background:#dadada;"></div>
<div class="r" style="left:203px;top:311px;width:1px;height:16px;background:#dadada;"></div>
<div class="r" style="left:262px;top:311px;width:1px;height:16px;background:#dadada;"></div>
<div class="r" style="left:317px;top:311px;width:1px;height:16px;background:#dadada;"></div>
<div class="r" style="left:412px;top:311px;width:1px;height:16px;background:#dadada;"></div>
<div class="r" style="left:469px;top:311px;width:1px;height:16px;background:#dadada;"></div>
<div class="r" style="left:516px;top:311px;width:1px;height:16px;background:#dadada;"></div>
<div class="r" style="left:597px;top:311px;width:1px;height:16px;background:#dadada;"></div>
<div class="r" style="left:653px;top:311px;width:1px;height:16px;background:#dadada;"></div>
<div class="r" style="left:708px;top:311px;width:1px;height:16px;background:#dadada;"></div>
<div class="r" style="left:789px;top:311px;width:1px;height:16px;background:#dadada;"></div>
<div class="r" style="left:846px;top:311px;width:1px;height:16px;background:#dadada;"></div>
<div class="r" style="left:893px;top:311px;width:1px;height:16px;background:#dadada;"></div>
<div class="r" style="left:982px;top:311px;width:1px;height:16px;background:#dadada;"></div>
<div class="r" style="left:1113px;top:311px;width:1px;height:16px;background:#dadada;"></div>
<div class="r" style="left:1171px;top:311px;width:1px;height:16px;background:#dadada;"></div>
<div class="r" style="left:1226px;top:311px;width:1px;height:16px;background:#dadada;"></div>
<div class="r" style="left:1281px;top:311px;width:1px;height:16px;background:#dadada;"></div>
<div class="r" style="left:26px;top:327px;width:1284px;height:1px;background:#dadada;"></div>
<div class="r" style="left:203px;top:328px;width:1px;height:16px;background:#dadada;"></div>
<div class="r" style="left:262px;top:328px;width:1px;height:16px;background:#dadada;"></div>
<div class="r" style="left:317px;top:328px;width:1px;height:16px;background:#dadada;"></div>
<div class="r" style="left:412px;top:328px;width:1px;height:16px;background:#dadada;"></div>
<div class="r" style="left:469px;top:328px;width:1px;height:16px;background:#dadada;"></div>
<div class="r" style="left:516px;top:328px;width:1px;height:16px;background:#dadada;"></div>
<div class="r" style="left:597px;top:328px;width:1px;height:16px;background:#dadada;"></div>
<div class="r" style="left:653px;top:328px;width:1px;height:16px;background:#dadada;"></div>
<div class="r" style="left:708px;top:328px;width:1px;height:16px;background:#dadada;"></div>
<div class="r" style="left:789px;top:328px;width:1px;height:16px;background:#dadada;"></div>
<div class="r" style="left:846px;top:328px;width:1px;height:16px;background:#dadada;"></div>
<div class="r" style="left:893px;top:328px;width:1px;height:16px;background:#dadada;"></div>
<div class="r" style="left:982px;top:328px;width:1px;height:16px;background:#dadada;"></div>
<div class="r" style="left:1113px;top:328px;width:1px;height:16px;background:#dadada;"></div>
<div class="r" style="left:1171px;top:328px;width:1px;height:16px;background:#dadada;"></div>
<div class="r" style="left:1226px;top:328px;width:1px;height:16px;background:#dadada;"></div>
<div class="r" style="left:1281px;top:328px;width:1px;height:16px;background:#dadada;"></div>
<div class="r" style="left:26px;top:344px;width:1284px;height:1px;background:#dadada;"></div>
<div class="r" style="left:203px;top:345px;width:1px;height:16px;background:#dadada;"></div>
<div class="r" style="left:262px;top:345px;width:1px;height:16px;background:#dadada;"></div>
<div class="r" style="left:317px;top:345px;width:1px;height:16px;background:#dadada;"></div>
<div class="r" style="left:412px;top:345px;width:1px;height:16px;background:#dadada;"></div>
<div class="r" style="left:469px;top:345px;width:1px;height:16px;background:#dadada;"></div>
<div class="r" style="left:516px;top:345px;width:1px;height:16px;background:#dadada;"></div>
<div class="r" style="left:597px;top:345px;width:1px;height:16px;background:#dadada;"></div>
<div class="r" style="left:653px;top:345px;width:1px;height:16px;background:#dadada;"></div>
<div class="r" style="left:708px;top:345px;width:1px;height:16px;background:#dadada;"></div>
<div class="r" style="left:789px;top:345px;width:1px;height:16px;background:#dadada;"></div>
<div class="r" style="left:846px;top:345px;width:1px;height:16px;background:#dadada;"></div>
<div class="r" style="left:893px;top:345px;width:1px;height:16px;background:#dadada;"></div>
<div class="r" style="left:982px;top:345px;width:1px;height:16px;background:#dadada;"></div>
<div class="r" style="left:1113px;top:345px;width:1px;height:16px;background:#dadada;"></div>
<div class="r" style="left:1171px;top:345px;width:1px;height:16px;background:#dadada;"></div>
<div class="r" style="left:1226px;top:345px;width:1px;height:16px;background:#dadada;"></div>
<div class="r" style="left:1281px;top:345px;width:1px;height:16px;background:#dadada;"></div>
<div class="r" style="left:26px;top:361px;width:1284px;height:1px;background:#dadada;"></div>
<div class="r" style="left:203px;top:362px;width:1px;height:16px;background:#dadada;"></div>
<div class="r" style="left:262px;top:362px;width:1px;height:16px;background:#dadada;"></div>
<div class="r" style="left:317px;top:362px;width:1px;height:16px;background:#dadada;"></div>
<div class="r" style="left:412px;top:362px;width:1px;height:16px;background:#dadada;"></div>
<div class="r" style="left:469px;top:362px;width:1px;height:16px;background:#dadada;"></div>
<div class="r" style="left:516px;top:362px;width:1px;height:16px;background:#dadada;"></div>
<div class="r" style="left:597px;top:362px;width:1px;height:16px;background:#dadada;"></div>
<div class="r" style="left:653px;top:362px;width:1px;height:16px;background:#dadada;"></div>
<div class="r" style="left:708px;top:362px;width:1px;height:16px;background:#dadada;"></div>
<div class="r" style="left:789px;top:362px;width:1px;height:16px;background:#dadada;"></div>
<div class="r" style="left:846px;top:362px;width:1px;height:16px;background:#dadada;"></div>
<div class="r" style="left:893px;top:362px;width:1px;height:16px;background:#dadada;"></div>
<div class="r" style="left:982px;top:362px;width:1px;height:16px;background:#dadada;"></div>
<div class="r" style="left:1113px;top:362px;width:1px;height:16px;background:#dadada;"></div>
<div class="r" style="left:1171px;top:362px;width:1px;height:16px;background:#dadada;"></div>
<div class="r" style="left:1226px;top:362px;width:1px;height:16px;background:#dadada;"></div>
<div class="r" style="left:1281px;top:362px;width:1px;height:16px;background:#dadada;"></div>
<div class="r" style="left:26px;top:378px;width:1284px;height:1px;background:#dadada;"></div>
<div class="r" style="left:203px;top:379px;width:1px;height:16px;background:#dadada;"></div>
<div class="r" style="left:262px;top:379px;width:1px;height:16px;background:#dadada;"></div>
<div class="r" style="left:317px;top:379px;width:1px;height:16px;background:#dadada;"></div>
<div class="r" style="left:412px;top:379px;width:1px;height:16px;background:#dadada;"></div>
<div class="r" style="left:469px;top:379px;width:1px;height:16px;background:#dadada;"></div>
<div class="r" style="left:516px;top:379px;width:1px;height:16px;background:#dadada;"></div>
<div class="r" style="left:597px;top:379px;width:1px;height:16px;background:#dadada;"></div>
<div class="r" style="left:653px;top:379px;width:1px;height:16px;background:#dadada;"></div>
<div class="r" style="left:708px;top:379px;width:1px;height:16px;background:#dadada;"></div>
<div class="r" style="left:789px;top:379px;width:1px;height:16px;background:#dadada;"></div>
<div class="r" style="left:846px;top:379px;width:1px;height:16px;background:#dadada;"></div>
<div class="r" style="left:893px;top:379px;width:1px;height:16px;background:#dadada;"></div>
<div class="r" style="left:982px;top:379px;width:1px;height:16px;background:#dadada;"></div>
<div class="r" style="left:1113px;top:379px;width:1px;height:16px;background:#dadada;"></div>
<div class="r" style="left:1171px;top:379px;width:1px;height:16px;background:#dadada;"></div>
<div class="r" style="left:1226px;top:379px;width:1px;height:16px;background:#dadada;"></div>
<div class="r" style="left:1281px;top:379px;width:1px;height:16px;background:#dadada;"></div>
<div class="r" style="left:26px;top:395px;width:1284px;height:1px;background:#dadada;"></div>
<div class="r" style="left:203px;top:396px;width:1px;height:16px;background:#dadada;"></div>
<div class="r" style="left:262px;top:396px;width:1px;height:16px;background:#dadada;"></div>
<div class="r" style="left:317px;top:396px;width:1px;height:16px;background:#dadada;"></div>
<div class="r" style="left:412px;top:396px;width:1px;height:16px;background:#dadada;"></div>
<div class="r" style="left:469px;top:396px;width:1px;height:16px;background:#dadada;"></div>
<div class="r" style="left:516px;top:396px;width:1px;height:16px;background:#dadada;"></div>
<div class="r" style="left:597px;top:396px;width:1px;height:16px;background:#dadada;"></div>
<div class="r" style="left:653px;top:396px;width:1px;height:16px;background:#dadada;"></div>
<div class="r" style="left:708px;top:396px;width:1px;height:16px;background:#dadada;"></div>
<div class="r" style="left:789px;top:396px;width:1px;height:16px;background:#dadada;"></div>
<div class="r" style="left:846px;top:396px;width:1px;height:16px;background:#dadada;"></div>
<div class="r" style="left:893px;top:396px;width:1px;height:16px;background:#dadada;"></div>
<div class="r" style="left:982px;top:396px;width:1px;height:16px;background:#dadada;"></div>
<div class="r" style="left:1113px;top:396px;width:1px;height:16px;background:#dadada;"></div>
<div class="r" style="left:1171px;top:396px;width:1px;height:16px;background:#dadada;"></div>
<div class="r" style="left:1226px;top:396px;width:1px;height:16px;background:#dadada;"></div>
<div class="r" style="left:1281px;top:396px;width:1px;height:16px;background:#dadada;"></div>
<div class="r" style="left:26px;top:412px;width:1284px;height:1px;background:#dadada;"></div>
<div class="r" style="left:317px;top:413px;width:1px;height:16px;background:#dadada;"></div>
<div class="r" style="left:412px;top:413px;width:1px;height:16px;background:#dadada;"></div>
<div class="r" style="left:469px;top:413px;width:1px;height:16px;background:#dadada;"></div>
<div class="r" style="left:516px;top:413px;width:1px;height:16px;background:#dadada;"></div>
<div class="r" style="left:597px;top:413px;width:1px;height:16px;background:#dadada;"></div>
<div class="r" style="left:653px;top:413px;width:1px;height:16px;background:#dadada;"></div>
<div class="r" style="left:708px;top:413px;width:1px;height:16px;background:#dadada;"></div>
<div class="r" style="left:789px;top:413px;width:1px;height:16px;background:#dadada;"></div>
<div class="r" style="left:846px;top:413px;width:1px;height:16px;background:#dadada;"></div>
<div class="r" style="left:893px;top:413px;width:1px;height:16px;background:#dadada;"></div>
<div class="r" style="left:982px;top:413px;width:1px;height:16px;background:#dadada;"></div>
<div class="r" style="left:1113px;top:413px;width:1px;height:16px;background:#dadada;"></div>
<div class="r" style="left:1171px;top:413px;width:1px;height:16px;background:#dadada;"></div>
<div class="r" style="left:1226px;top:413px;width:1px;height:16px;background:#dadada;"></div>
<div class="r" style="left:1281px;top:413px;width:1px;height:16px;background:#dadada;"></div>
<div class="r" style="left:26px;top:429px;width:1284px;height:1px;background:#dadada;"></div>
<div class="r" style="left:203px;top:430px;width:1px;height:16px;background:#dadada;"></div>
<div class="r" style="left:262px;top:430px;width:1px;height:16px;background:#dadada;"></div>
<div class="r" style="left:317px;top:430px;width:1px;height:16px;background:#dadada;"></div>
<div class="r" style="left:412px;top:430px;width:1px;height:16px;background:#dadada;"></div>
<div class="r" style="left:469px;top:430px;width:1px;height:16px;background:#dadada;"></div>
<div class="r" style="left:516px;top:430px;width:1px;height:16px;background:#dadada;"></div>
<div class="r" style="left:597px;top:430px;width:1px;height:16px;background:#dadada;"></div>
<div class="r" style="left:653px;top:430px;width:1px;height:16px;background:#dadada;"></div>
<div class="r" style="left:708px;top:430px;width:1px;height:16px;background:#dadada;"></div>
<div class="r" style="left:789px;top:430px;width:1px;height:16px;background:#dadada;"></div>
<div class="r" style="left:846px;top:430px;width:1px;height:16px;background:#dadada;"></div>
<div class="r" style="left:893px;top:430px;width:1px;height:16px;background:#dadada;"></div>
<div class="r" style="left:982px;top:430px;width:1px;height:16px;background:#dadada;"></div>
<div class="r" style="left:1113px;top:430px;width:1px;height:16px;background:#dadada;"></div>
<div class="r" style="left:1171px;top:430px;width:1px;height:16px;background:#dadada;"></div>
<div class="r" style="left:1226px;top:430px;width:1px;height:16px;background:#dadada;"></div>
<div class="r" style="left:1281px;top:430px;width:1px;height:16px;background:#dadada;"></div>
<div class="r" style="left:26px;top:446px;width:1284px;height:1px;background:#dadada;"></div>
<div class="r" style="left:203px;top:447px;width:1px;height:16px;background:#dadada;"></div>
<div class="r" style="left:262px;top:447px;width:1px;height:16px;background:#dadada;"></div>
<div class="r" style="left:317px;top:447px;width:1px;height:16px;background:#dadada;"></div>
<div class="r" style="left:412px;top:447px;width:1px;height:16px;background:#dadada;"></div>
<div class="r" style="left:469px;top:447px;width:1px;height:16px;background:#dadada;"></div>
<div class="r" style="left:516px;top:447px;width:1px;height:16px;background:#dadada;"></div>
<div class="r" style="left:597px;top:447px;width:1px;height:16px;background:#dadada;"></div>
<div class="r" style="left:653px;top:447px;width:1px;height:16px;background:#dadada;"></div>
<div class="r" style="left:708px;top:447px;width:1px;height:16px;background:#dadada;"></div>
<div class="r" style="left:789px;top:447px;width:1px;height:16px;background:#dadada;"></div>
<div class="r" style="left:846px;top:447px;width:1px;height:16px;background:#dadada;"></div>
<div class="r" style="left:893px;top:447px;width:1px;height:16px;background:#dadada;"></div>
<div class="r" style="left:982px;top:447px;width:1px;height:16px;background:#dadada;"></div>
<div class="r" style="left:1113px;top:447px;width:1px;height:16px;background:#dadada;"></div>
<div class="r" style="left:1171px;top:447px;width:1px;height:16px;background:#dadada;"></div>
<div class="r" style="left:1226px;top:447px;width:1px;height:16px;background:#dadada;"></div>
<div class="r" style="left:1281px;top:447px;width:1px;height:16px;background:#dadada;"></div>
<div class="r" style="left:26px;top:463px;width:1284px;height:1px;background:#dadada;"></div>
<div class="r" style="left:203px;top:464px;width:1px;height:16px;background:#dadada;"></div>
<div class="r" style="left:262px;top:464px;width:1px;height:16px;background:#dadada;"></div>
<div class="r" style="left:317px;top:464px;width:1px;height:16px;background:#dadada;"></div>
<div class="r" style="left:412px;top:464px;width:1px;height:16px;background:#dadada;"></div>
<div class="r" style="left:469px;top:464px;width:1px;height:16px;background:#dadada;"></div>
<div class="r" style="left:516px;top:464px;width:1px;height:16px;background:#dadada;"></div>
<div class="r" style="left:597px;top:464px;width:1px;height:16px;background:#dadada;"></div>
<div class="r" style="left:653px;top:464px;width:1px;height:16px;background:#dadada;"></div>
<div class="r" style="left:708px;top:464px;width:1px;height:16px;background:#dadada;"></div>
<div class="r" style="left:789px;top:464px;width:1px;height:16px;background:#dadada;"></div>
<div class="r" style="left:846px;top:464px;width:1px;height:16px;background:#dadada;"></div>
<div class="r" style="left:893px;top:464px;width:1px;height:16px;background:#dadada;"></div>
<div class="r" style="left:982px;top:464px;width:1px;height:16px;background:#dadada;"></div>
<div class="r" style="left:1113px;top:464px;width:1px;height:16px;background:#dadada;"></div>
<div class="r" style="left:1171px;top:464px;width:1px;height:16px;background:#dadada;"></div>
<div class="r" style="left:1226px;top:464px;width:1px;height:16px;background:#dadada;"></div>
<div class="r" style="left:1281px;top:464px;width:1px;height:16px;background:#dadada;"></div>
<div class="r" style="left:26px;top:480px;width:1284px;height:1px;background:#dadada;"></div>
<div class="r" style="left:203px;top:481px;width:1px;height:16px;background:#dadada;"></div>
<div class="r" style="left:262px;top:481px;width:1px;height:16px;background:#dadada;"></div>
<div class="r" style="left:317px;top:481px;width:1px;height:16px;background:#dadada;"></div>
<div class="r" style="left:412px;top:481px;width:1px;height:16px;background:#dadada;"></div>
<div class="r" style="left:469px;top:481px;width:1px;height:16px;background:#dadada;"></div>
<div class="r" style="left:516px;top:481px;width:1px;height:16px;background:#dadada;"></div>
<div class="r" style="left:597px;top:481px;width:1px;height:16px;background:#dadada;"></div>
<div class="r" style="left:653px;top:481px;width:1px;height:16px;background:#dadada;"></div>
<div class="r" style="left:708px;top:481px;width:1px;height:16px;background:#dadada;"></div>
<div class="r" style="left:789px;top:481px;width:1px;height:16px;background:#dadada;"></div>
<div class="r" style="left:846px;top:481px;width:1px;height:16px;background:#dadada;"></div>
<div class="r" style="left:893px;top:481px;width:1px;height:16px;background:#dadada;"></div>
<div class="r" style="left:982px;top:481px;width:1px;height:16px;background:#dadada;"></div>
<div class="r" style="left:1113px;top:481px;width:1px;height:16px;background:#dadada;"></div>
<div class="r" style="left:1171px;top:481px;width:1px;height:16px;background:#dadada;"></div>
<div class="r" style="left:1226px;top:481px;width:1px;height:16px;background:#dadada;"></div>
<div class="r" style="left:1281px;top:481px;width:1px;height:16px;background:#dadada;"></div>
<div class="r" style="left:26px;top:497px;width:1284px;height:1px;background:#dadada;"></div>
<div class="r" style="left:203px;top:498px;width:1px;height:16px;background:#dadada;"></div>
<div class="r" style="left:262px;top:498px;width:1px;height:16px;background:#dadada;"></div>
<div class="r" style="left:317px;top:498px;width:1px;height:16px;background:#dadada;"></div>
<div class="r" style="left:412px;top:498px;width:1px;height:16px;background:#dadada;"></div>
<div class="r" style="left:469px;top:498px;width:1px;height:16px;background:#dadada;"></div>
<div class="r" style="left:516px;top:498px;width:1px;height:16px;background:#dadada;"></div>
<div class="r" style="left:597px;top:498px;width:1px;height:16px;background:#dadada;"></div>
<div class="r" style="left:653px;top:498px;width:1px;height:16px;background:#dadada;"></div>
<div class="r" style="left:708px;top:498px;width:1px;height:16px;background:#dadada;"></div>
<div class="r" style="left:789px;top:498px;width:1px;height:16px;background:#dadada;"></div>
<div class="r" style="left:846px;top:498px;width:1px;height:16px;background:#dadada;"></div>
<div class="r" style="left:893px;top:498px;width:1px;height:16px;background:#dadada;"></div>
<div class="r" style="left:982px;top:498px;width:1px;height:16px;background:#dadada;"></div>
<div class="r" style="left:1113px;top:498px;width:1px;height:16px;background:#dadada;"></div>
<div class="r" style="left:1171px;top:498px;width:1px;height:16px;background:#dadada;"></div>
<div class="r" style="left:1226px;top:498px;width:1px;height:16px;background:#dadada;"></div>
<div class="r" style="left:1281px;top:498px;width:1px;height:16px;background:#dadada;"></div>
<div class="r" style="left:26px;top:514px;width:1284px;height:1px;background:#dadada;"></div>
<div class="r" style="left:203px;top:515px;width:1px;height:16px;background:#dadada;"></div>
<div class="r" style="left:262px;top:515px;width:1px;height:16px;background:#dadada;"></div>
<div class="r" style="left:317px;top:515px;width:1px;height:16px;background:#dadada;"></div>
<div class="r" style="left:412px;top:515px;width:1px;height:16px;background:#dadada;"></div>
<div class="r" style="left:469px;top:515px;width:1px;height:16px;background:#dadada;"></div>
<div class="r" style="left:516px;top:515px;width:1px;height:16px;background:#dadada;"></div>
<div class="r" style="left:597px;top:515px;width:1px;height:16px;background:#dadada;"></div>
<div class="r" style="left:653px;top:515px;width:1px;height:16px;background:#dadada;"></div>
<div class="r" style="left:708px;top:515px;width:1px;height:16px;background:#dadada;"></div>
<div class="r" style="left:789px;top:515px;width:1px;height:16px;background:#dadada;"></div>
<div class="r" style="left:846px;top:515px;width:1px;height:16px;background:#dadada;"></div>
<div class="r" style="left:893px;top:515px;width:1px;height:16px;background:#dadada;"></div>
<div class="r" style="left:982px;top:515px;width:1px;height:16px;background:#dadada;"></div>
<div class="r" style="left:1113px;top:515px;width:1px;height:16px;background:#dadada;"></div>
<div class="r" style="left:1171px;top:515px;width:1px;height:16px;background:#dadada;"></div>
<div class="r" style="left:1226px;top:515px;width:1px;height:16px;background:#dadada;"></div>
<div class="r" style="left:1281px;top:515px;width:1px;height:16px;background:#dadada;"></div>
<div class="r" style="left:26px;top:531px;width:1284px;height:1px;background:#dadada;"></div>
<div class="r" style="left:1171px;top:532px;width:1px;height:16px;background:#dadada;"></div>
<div class="r" style="left:1226px;top:532px;width:1px;height:16px;background:#dadada;"></div>
<div class="r" style="left:1281px;top:532px;width:1px;height:16px;background:#dadada;"></div>
<div class="r" style="left:1171px;top:548px;width:139px;height:1px;background:#dadada;"></div>
<div class="r" style="left:1171px;top:549px;width:1px;height:16px;background:#dadada;"></div>
<div class="r" style="left:1226px;top:549px;width:1px;height:16px;background:#dadada;"></div>
<div class="r" style="left:1281px;top:549px;width:1px;height:16px;background:#dadada;"></div>
<div class="r" style="left:1171px;top:565px;width:139px;height:1px;background:#dadada;"></div>
<div class="r" style="left:1171px;top:566px;width:1px;height:16px;background:#dadada;"></div>
<div class="r" style="left:1226px;top:566px;width:1px;height:16px;background:#dadada;"></div>
<div class="r" style="left:1281px;top:566px;width:1px;height:16px;background:#dadada;"></div>
<div class="r" style="left:1171px;top:582px;width:139px;height:1px;background:#dadada;"></div>
<div class="r" style="left:1171px;top:583px;width:1px;height:16px;background:#dadada;"></div>
<div class="r" style="left:1226px;top:583px;width:1px;height:16px;background:#dadada;"></div>
<div class="r" style="left:1281px;top:583px;width:1px;height:16px;background:#dadada;"></div>
<div class="r" style="left:1171px;top:599px;width:139px;height:1px;background:#dadada;"></div>
<div class="r" style="left:1171px;top:600px;width:1px;height:16px;background:#dadada;"></div>
<div class="r" style="left:1226px;top:600px;width:1px;height:16px;background:#dadada;"></div>
<div class="r" style="left:1281px;top:600px;width:1px;height:16px;background:#dadada;"></div>
<div class="r" style="left:26px;top:616px;width:1284px;height:1px;background:#dadada;"></div>
<div class="r" style="left:597px;top:617px;width:1px;height:16px;background:#dadada;"></div>
<div class="r" style="left:653px;top:617px;width:1px;height:16px;background:#dadada;"></div>
<div class="r" style="left:708px;top:617px;width:1px;height:16px;background:#dadada;"></div>
<div class="r" style="left:789px;top:617px;width:1px;height:16px;background:#dadada;"></div>
<div class="r" style="left:846px;top:617px;width:1px;height:16px;background:#dadada;"></div>
<div class="r" style="left:893px;top:617px;width:1px;height:16px;background:#dadada;"></div>
<div class="r" style="left:982px;top:617px;width:1px;height:16px;background:#dadada;"></div>
<div class="r" style="left:1113px;top:617px;width:1px;height:16px;background:#dadada;"></div>
<div class="r" style="left:1171px;top:617px;width:1px;height:16px;background:#dadada;"></div>
<div class="r" style="left:1226px;top:617px;width:1px;height:16px;background:#dadada;"></div>
<div class="r" style="left:1281px;top:617px;width:1px;height:16px;background:#dadada;"></div>
<div class="r" style="left:26px;top:633px;width:1284px;height:1px;background:#dadada;"></div>
<div class="r" style="left:1113px;top:634px;width:1px;height:16px;background:#dadada;"></div>
<div class="r" style="left:1171px;top:634px;width:1px;height:16px;background:#dadada;"></div>
<div class="r" style="left:1226px;top:634px;width:1px;height:16px;background:#dadada;"></div>
<div class="r" style="left:1281px;top:634px;width:1px;height:16px;background:#dadada;"></div>
<div class="r" style="left:26px;top:650px;width:1284px;height:1px;background:#dadada;"></div>
<div class="r" style="left:203px;top:651px;width:1px;height:16px;background:#dadada;"></div>
<div class="r" style="left:262px;top:651px;width:1px;height:16px;background:#dadada;"></div>
<div class="r" style="left:317px;top:651px;width:1px;height:16px;background:#dadada;"></div>
<div class="r" style="left:412px;top:651px;width:1px;height:16px;background:#dadada;"></div>
<div class="r" style="left:469px;top:651px;width:1px;height:16px;background:#dadada;"></div>
<div class="r" style="left:516px;top:651px;width:1px;height:16px;background:#dadada;"></div>
<div class="r" style="left:597px;top:651px;width:1px;height:16px;background:#dadada;"></div>
<div class="r" style="left:653px;top:651px;width:1px;height:16px;background:#dadada;"></div>
<div class="r" style="left:708px;top:651px;width:1px;height:16px;background:#dadada;"></div>
<div class="r" style="left:789px;top:651px;width:1px;height:16px;background:#dadada;"></div>
<div class="r" style="left:846px;top:651px;width:1px;height:16px;background:#dadada;"></div>
<div class="r" style="left:893px;top:651px;width:1px;height:16px;background:#dadada;"></div>
<div class="r" style="left:982px;top:651px;width:1px;height:16px;background:#dadada;"></div>
<div class="r" style="left:1113px;top:651px;width:1px;height:16px;background:#dadada;"></div>
<div class="r" style="left:1171px;top:651px;width:1px;height:16px;background:#dadada;"></div>
<div class="r" style="left:1226px;top:651px;width:1px;height:16px;background:#dadada;"></div>
<div class="r" style="left:1281px;top:651px;width:1px;height:16px;background:#dadada;"></div>
<div class="r" style="left:26px;top:667px;width:1284px;height:1px;background:#dadada;"></div>
<div class="r" style="left:203px;top:668px;width:1px;height:16px;background:#dadada;"></div>
<div class="r" style="left:262px;top:668px;width:1px;height:16px;background:#dadada;"></div>
<div class="r" style="left:317px;top:668px;width:1px;height:16px;background:#dadada;"></div>
<div class="r" style="left:412px;top:668px;width:1px;height:16px;background:#dadada;"></div>
<div class="r" style="left:469px;top:668px;width:1px;height:16px;background:#dadada;"></div>
<div class="r" style="left:516px;top:668px;width:1px;height:16px;background:#dadada;"></div>
<div class="r" style="left:597px;top:668px;width:1px;height:16px;background:#dadada;"></div>
<div class="r" style="left:653px;top:668px;width:1px;height:16px;background:#dadada;"></div>
<div class="r" style="left:708px;top:668px;width:1px;height:16px;background:#dadada;"></div>
<div class="r" style="left:789px;top:668px;width:1px;height:16px;background:#dadada;"></div>
<div class="r" style="left:846px;top:668px;width:1px;height:16px;background:#dadada;"></div>
<div class="r" style="left:893px;top:668px;width:1px;height:16px;background:#dadada;"></div>
<div class="r" style="left:982px;top:668px;width:1px;height:16px;background:#dadada;"></div>
<div class="r" style="left:1113px;top:668px;width:1px;height:16px;background:#dadada;"></div>
<div class="r" style="left:1171px;top:668px;width:1px;height:16px;background:#dadada;"></div>
<div class="r" style="left:1226px;top:668px;width:1px;height:16px;background:#dadada;"></div>
<div class="r" style="left:1281px;top:668px;width:1px;height:16px;background:#dadada;"></div>
<div class="r" style="left:26px;top:684px;width:1284px;height:1px;background:#dadada;"></div>
<div class="r" style="left:203px;top:685px;width:1px;height:16px;background:#dadada;"></div>
<div class="r" style="left:262px;top:685px;width:1px;height:16px;background:#dadada;"></div>
<div class="r" style="left:317px;top:685px;width:1px;height:16px;background:#dadada;"></div>
<div class="r" style="left:412px;top:685px;width:1px;height:16px;background:#dadada;"></div>
<div class="r" style="left:469px;top:685px;width:1px;height:16px;background:#dadada;"></div>
<div class="r" style="left:516px;top:685px;width:1px;height:16px;background:#dadada;"></div>
<div class="r" style="left:597px;top:685px;width:1px;height:16px;background:#dadada;"></div>
<div class="r" style="left:653px;top:685px;width:1px;height:16px;background:#dadada;"></div>
<div class="r" style="left:708px;top:685px;width:1px;height:16px;background:#dadada;"></div>
<div class="r" style="left:789px;top:685px;width:1px;height:16px;background:#dadada;"></div>
<div class="r" style="left:846px;top:685px;width:1px;height:16px;background:#dadada;"></div>
<div class="r" style="left:893px;top:685px;width:1px;height:16px;background:#dadada;"></div>
<div class="r" style="left:982px;top:685px;width:1px;height:16px;background:#dadada;"></div>
<div class="r" style="left:1113px;top:685px;width:1px;height:16px;background:#dadada;"></div>
<div class="r" style="left:1171px;top:685px;width:1px;height:16px;background:#dadada;"></div>
<div class="r" style="left:1226px;top:685px;width:1px;height:16px;background:#dadada;"></div>
<div class="r" style="left:1281px;top:685px;width:1px;height:16px;background:#dadada;"></div>
<div class="r" style="left:26px;top:701px;width:1284px;height:1px;background:#dadada;"></div>
<div class="r" style="left:203px;top:702px;width:1px;height:16px;background:#dadada;"></div>
<div class="r" style="left:262px;top:702px;width:1px;height:16px;background:#dadada;"></div>
<div class="r" style="left:317px;top:702px;width:1px;height:16px;background:#dadada;"></div>
<div class="r" style="left:412px;top:702px;width:1px;height:16px;background:#dadada;"></div>
<div class="r" style="left:469px;top:702px;width:1px;height:16px;background:#dadada;"></div>
<div class="r" style="left:516px;top:702px;width:1px;height:16px;background:#dadada;"></div>
<div class="r" style="left:597px;top:702px;width:1px;height:16px;background:#dadada;"></div>
<div class="r" style="left:653px;top:702px;width:1px;height:16px;background:#dadada;"></div>
<div class="r" style="left:708px;top:702px;width:1px;height:16px;background:#dadada;"></div>
<div class="r" style="left:789px;top:702px;width:1px;height:16px;background:#dadada;"></div>
<div class="r" style="left:846px;top:702px;width:1px;height:16px;background:#dadada;"></div>
<div class="r" style="left:893px;top:702px;width:1px;height:16px;background:#dadada;"></div>
<div class="r" style="left:982px;top:702px;width:1px;height:16px;background:#dadada;"></div>
<div class="r" style="left:1113px;top:702px;width:1px;height:16px;background:#dadada;"></div>
<div class="r" style="left:1171px;top:702px;width:1px;height:16px;background:#dadada;"></div>
<div class="r" style="left:1226px;top:702px;width:1px;height:16px;background:#dadada;"></div>
<div class="r" style="left:1281px;top:702px;width:1px;height:16px;background:#dadada;"></div>
<div class="r" style="left:26px;top:718px;width:1284px;height:1px;background:#dadada;"></div>
<div class="r" style="left:203px;top:719px;width:1px;height:16px;background:#dadada;"></div>
<div class="r" style="left:262px;top:719px;width:1px;height:16px;background:#dadada;"></div>
<div class="r" style="left:317px;top:719px;width:1px;height:16px;background:#dadada;"></div>
<div class="r" style="left:412px;top:719px;width:1px;height:16px;background:#dadada;"></div>
<div class="r" style="left:469px;top:719px;width:1px;height:16px;background:#dadada;"></div>
<div class="r" style="left:516px;top:719px;width:1px;height:16px;background:#dadada;"></div>
<div class="r" style="left:597px;top:719px;width:1px;height:16px;background:#dadada;"></div>
<div class="r" style="left:653px;top:719px;width:1px;height:16px;background:#dadada;"></div>
<div class="r" style="left:708px;top:719px;width:1px;height:16px;background:#dadada;"></div>
<div class="r" style="left:789px;top:719px;width:1px;height:16px;background:#dadada;"></div>
<div class="r" style="left:846px;top:719px;width:1px;height:16px;background:#dadada;"></div>
<div class="r" style="left:893px;top:719px;width:1px;height:16px;background:#dadada;"></div>
<div class="r" style="left:982px;top:719px;width:1px;height:16px;background:#dadada;"></div>
<div class="r" style="left:1113px;top:719px;width:1px;height:16px;background:#dadada;"></div>
<div class="r" style="left:1171px;top:719px;width:1px;height:16px;background:#dadada;"></div>
<div class="r" style="left:1226px;top:719px;width:1px;height:16px;background:#dadada;"></div>
<div class="r" style="left:1281px;top:719px;width:1px;height:16px;background:#dadada;"></div>
<div class="r" style="left:26px;top:735px;width:1284px;height:1px;background:#dadada;"></div>
<div class="r" style="left:203px;top:736px;width:1px;height:20px;background:#dadada;"></div>
<div class="r" style="left:262px;top:736px;width:1px;height:20px;background:#dadada;"></div>
<div class="r" style="left:317px;top:736px;width:1px;height:20px;background:#dadada;"></div>
<div class="r" style="left:412px;top:736px;width:1px;height:20px;background:#dadada;"></div>
<div class="r" style="left:469px;top:736px;width:1px;height:20px;background:#dadada;"></div>
<div class="r" style="left:516px;top:736px;width:1px;height:20px;background:#dadada;"></div>
<div class="r" style="left:597px;top:736px;width:1px;height:20px;background:#dadada;"></div>
<div class="r" style="left:653px;top:736px;width:1px;height:20px;background:#dadada;"></div>
<div class="r" style="left:708px;top:736px;width:1px;height:20px;background:#dadada;"></div>
<div class="r" style="left:789px;top:736px;width:1px;height:20px;background:#dadada;"></div>
<div class="r" style="left:846px;top:736px;width:1px;height:20px;background:#dadada;"></div>
<div class="r" style="left:893px;top:736px;width:1px;height:20px;background:#dadada;"></div>
<div class="r" style="left:982px;top:736px;width:1px;height:20px;background:#dadada;"></div>
<div class="r" style="left:1113px;top:736px;width:1px;height:20px;background:#dadada;"></div>
<div class="r" style="left:1171px;top:736px;width:1px;height:20px;background:#dadada;"></div>
<div class="r" style="left:1226px;top:736px;width:1px;height:20px;background:#dadada;"></div>
<div class="r" style="left:1281px;top:736px;width:1px;height:20px;background:#dadada;"></div>
<div class="r" style="left:26px;top:752px;width:1284px;height:1px;background:#dadada;"></div>
<div class="r" style="left:203px;top:226px;width:1px;height:170px;background:#000;"></div>
<div class="r" style="left:597px;top:226px;width:1px;height:170px;background:#000;"></div>
<div class="r" style="left:982px;top:226px;width:1px;height:170px;background:#000;"></div>
<div class="r" style="left:1113px;top:226px;width:1px;height:170px;background:#000;"></div>
<div class="r" style="left:1171px;top:226px;width:1px;height:170px;background:#000;"></div>
<div class="r" style="left:262px;top:242px;width:1px;height:154px;background:#000;"></div>
<div class="r" style="left:317px;top:242px;width:1px;height:154px;background:#000;"></div>
<div class="r" style="left:412px;top:242px;width:1px;height:154px;background:#000;"></div>
<div class="r" style="left:469px;top:242px;width:1px;height:154px;background:#000;"></div>
<div class="r" style="left:516px;top:242px;width:1px;height:154px;background:#000;"></div>
<div class="r" style="left:653px;top:242px;width:1px;height:154px;background:#000;"></div>
<div class="r" style="left:708px;top:242px;width:1px;height:154px;background:#000;"></div>
<div class="r" style="left:789px;top:242px;width:1px;height:154px;background:#000;"></div>
<div class="r" style="left:846px;top:242px;width:1px;height:154px;background:#000;"></div>
<div class="r" style="left:893px;top:242px;width:1px;height:154px;background:#000;"></div>
<div class="r" style="left:203px;top:242px;width:780px;height:1px;background:#000;"></div>
<div class="r" style="left:25px;top:259px;width:1147px;height:1px;background:#000;"></div>
<div class="r" style="left:25px;top:276px;width:1147px;height:1px;background:#000;"></div>
<div class="r" style="left:25px;top:293px;width:1147px;height:1px;background:#000;"></div>
<div class="r" style="left:25px;top:310px;width:1147px;height:1px;background:#000;"></div>
<div class="r" style="left:25px;top:327px;width:1147px;height:1px;background:#000;"></div>
<div class="r" style="left:25px;top:344px;width:1147px;height:1px;background:#000;"></div>
<div class="r" style="left:25px;top:361px;width:1147px;height:1px;background:#000;"></div>
<div class="r" style="left:25px;top:378px;width:1147px;height:1px;background:#000;"></div>
<div class="r" style="left:25px;top:395px;width:1147px;height:1px;background:#000;"></div>
<div class="r" style="left:25px;top:412px;width:293px;height:1px;background:#000;"></div>
<div class="r" style="left:25px;top:429px;width:293px;height:1px;background:#000;"></div>
<div class="r" style="left:25px;top:446px;width:293px;height:1px;background:#000;"></div>
<div class="r" style="left:25px;top:463px;width:293px;height:1px;background:#000;"></div>
<div class="r" style="left:25px;top:480px;width:293px;height:1px;background:#000;"></div>
<div class="r" style="left:25px;top:497px;width:293px;height:1px;background:#000;"></div>
<div class="r" style="left:317px;top:412px;width:1px;height:86px;background:#000;"></div>
<div class="r" style="left:203px;top:429px;width:1px;height:69px;background:#000;"></div>
<div class="r" style="left:262px;top:429px;width:1px;height:69px;background:#000;"></div>
<div class="t" style="top:237.77px;font-size:11.5px;color:#000;font-weight:bold;letter-spacing:-0.118px;left:-485.56px;width:1200px;text-align:center;">Employee</div>
<div class="t" style="top:228.97px;font-size:11.5px;color:#000;font-weight:bold;letter-spacing:-0.165px;left:-199.58px;width:1200px;text-align:center;">Skill level by work task</div>
<div class="t" style="top:228.97px;font-size:11.5px;color:#000;font-weight:bold;letter-spacing:-0.368px;left:190.32px;width:1200px;text-align:center;">Employee Tasks</div>
<div class="t" style="top:237.77px;font-size:11.5px;color:#000;font-weight:bold;letter-spacing:-0.168px;left:448.52px;width:1200px;text-align:center;">Number of Tasks</div>
<div class="t" style="top:237.77px;font-size:11.5px;color:#000;font-weight:bold;letter-spacing:-0.375px;left:542.11px;width:1200px;text-align:center;">Skills level</div>
<div class="t" style="top:245.87px;font-size:11.5px;color:#000;font-weight:bold;letter-spacing:-0.247px;left:205.70px;">Data Entry</div>
<div class="t" style="top:245.87px;font-size:11.5px;color:#000;font-weight:bold;letter-spacing:0.155px;left:263.50px;">Inventory</div>
<div class="t" style="top:245.87px;font-size:11.5px;color:#000;font-weight:bold;letter-spacing:0.112px;left:-234.44px;width:1200px;text-align:center;">Report Writing</div>
<div class="t" style="top:245.87px;font-size:11.5px;color:#000;font-weight:bold;letter-spacing:-0.381px;left:414.60px;">Budgeting</div>
<div class="t" style="top:245.87px;font-size:11.5px;color:#000;font-weight:bold;letter-spacing:-0.275px;left:472.20px;">Training</div>
<div class="t" style="top:245.87px;font-size:11.5px;color:#000;font-weight:bold;letter-spacing:-0.565px;left:-42.78px;width:1200px;text-align:center;">Unassigned</div>
<div class="t" style="top:245.87px;font-size:11.5px;color:#000;font-weight:bold;letter-spacing:-0.247px;left:598.80px;">Data Entry</div>
<div class="t" style="top:245.87px;font-size:11.5px;color:#000;font-weight:bold;letter-spacing:0.155px;left:654.50px;">Inventory</div>
<div class="t" style="top:245.87px;font-size:11.5px;color:#000;font-weight:bold;letter-spacing:-0.011px;left:709.50px;">Report Writing</div>
<div class="t" style="top:245.87px;font-size:11.5px;color:#000;font-weight:bold;letter-spacing:-0.294px;left:790.50px;">Budgeting</div>
<div class="t" style="top:245.87px;font-size:11.5px;color:#000;font-weight:bold;letter-spacing:-0.275px;left:849.50px;">Training</div>
<div class="t" style="top:245.87px;font-size:11.5px;color:#000;font-weight:bold;letter-spacing:-0.565px;left:337.22px;width:1200px;text-align:center;">Unassigned</div>
<div class="t" style="top:263.01px;font-size:11.8px;color:#000;-webkit-text-stroke:0.22px #000;letter-spacing:-0.146px;left:28.30px;">Employee 1</div>
<div class="t" style="top:263.01px;font-size:11.8px;color:#000;-webkit-text-stroke:0.22px #000;right:1050.00px;text-align:right;">10</div>
<div class="t" style="top:263.01px;font-size:11.8px;color:#000;-webkit-text-stroke:0.22px #000;right:995.00px;text-align:right;">10</div>
<div class="t" style="top:263.01px;font-size:11.8px;color:#000;-webkit-text-stroke:0.22px #000;right:900.00px;text-align:right;">10</div>
<div class="t" style="top:263.01px;font-size:11.8px;color:#000;-webkit-text-stroke:0.22px #000;right:843.00px;text-align:right;">7</div>
<div class="t" style="top:263.01px;font-size:11.8px;color:#000;-webkit-text-stroke:0.22px #000;right:796.00px;text-align:right;">8</div>
<div class="t" style="top:263.01px;font-size:11.8px;color:#000;-webkit-text-stroke:0.22px #000;right:715.00px;text-align:right;">0</div>
<div class="t" style="top:263.01px;font-size:11.8px;color:#000;-webkit-text-stroke:0.22px #000;right:199.00px;text-align:right;">0</div>
<div class="t" style="top:263.01px;font-size:11.8px;color:#000;-webkit-text-stroke:0.22px #000;right:141.00px;text-align:right;">0</div>
<svg class="r" style="left:983px;top:260px" width="6" height="6" viewBox="0 0 6 6"><path d="M0,0 H6 L0,6 Z" fill="#1e7b34"/></svg>
<div class="t" style="top:280.01px;font-size:11.8px;color:#000;-webkit-text-stroke:0.22px #000;letter-spacing:-0.146px;left:28.30px;">Employee 2</div>
<div class="t" style="top:280.01px;font-size:11.8px;color:#000;-webkit-text-stroke:0.22px #000;right:1050.00px;text-align:right;">9</div>
<div class="t" style="top:280.01px;font-size:11.8px;color:#000;-webkit-text-stroke:0.22px #000;right:995.00px;text-align:right;">9</div>
<div class="t" style="top:280.01px;font-size:11.8px;color:#000;-webkit-text-stroke:0.22px #000;right:900.00px;text-align:right;">7</div>
<div class="t" style="top:280.01px;font-size:11.8px;color:#000;-webkit-text-stroke:0.22px #000;right:843.00px;text-align:right;">7</div>
<div class="t" style="top:280.01px;font-size:11.8px;color:#000;-webkit-text-stroke:0.22px #000;right:796.00px;text-align:right;">6</div>
<div class="t" style="top:280.01px;font-size:11.8px;color:#000;-webkit-text-stroke:0.22px #000;right:715.00px;text-align:right;">0</div>
<div class="t" style="top:280.01px;font-size:11.8px;color:#000;-webkit-text-stroke:0.22px #000;right:199.00px;text-align:right;">0</div>
<div class="t" style="top:280.01px;font-size:11.8px;color:#000;-webkit-text-stroke:0.22px #000;right:141.00px;text-align:right;">0</div>
<svg class="r" style="left:983px;top:277px" width="6" height="6" viewBox="0 0 6 6"><path d="M0,0 H6 L0,6 Z" fill="#1e7b34"/></svg>
<div class="t" style="top:297.01px;font-size:11.8px;color:#000;-webkit-text-stroke:0.22px #000;letter-spacing:-0.146px;left:28.30px;">Employee 3</div>
<div class="t" style="top:297.01px;font-size:11.8px;color:#000;-webkit-text-stroke:0.22px #000;right:1050.00px;text-align:right;">8</div>
<div class="t" style="top:297.01px;font-size:11.8px;color:#000;-webkit-text-stroke:0.22px #000;right:995.00px;text-align:right;">9</div>
<div class="t" style="top:297.01px;font-size:11.8px;color:#000;-webkit-text-stroke:0.22px #000;right:900.00px;text-align:right;">7</div>
<div class="t" style="top:297.01px;font-size:11.8px;color:#000;-webkit-text-stroke:0.22px #000;right:843.00px;text-align:right;">7</div>
<div class="t" style="top:297.01px;font-size:11.8px;color:#000;-webkit-text-stroke:0.22px #000;right:796.00px;text-align:right;">9</div>
<div class="t" style="top:297.01px;font-size:11.8px;color:#000;-webkit-text-stroke:0.22px #000;right:715.00px;text-align:right;">0</div>
<div class="t" style="top:297.01px;font-size:11.8px;color:#000;-webkit-text-stroke:0.22px #000;right:199.00px;text-align:right;">0</div>
<div class="t" style="top:297.01px;font-size:11.8px;color:#000;-webkit-text-stroke:0.22px #000;right:141.00px;text-align:right;">0</div>
<svg class="r" style="left:983px;top:294px" width="6" height="6" viewBox="0 0 6 6"><path d="M0,0 H6 L0,6 Z" fill="#1e7b34"/></svg>
<div class="t" style="top:314.01px;font-size:11.8px;color:#000;-webkit-text-stroke:0.22px #000;letter-spacing:-0.146px;left:28.30px;">Employee 4</div>
<div class="t" style="top:314.01px;font-size:11.8px;color:#000;-webkit-text-stroke:0.22px #000;right:1050.00px;text-align:right;">6</div>
<div class="t" style="top:314.01px;font-size:11.8px;color:#000;-webkit-text-stroke:0.22px #000;right:995.00px;text-align:right;">9</div>
<div class="t" style="top:314.01px;font-size:11.8px;color:#000;-webkit-text-stroke:0.22px #000;right:900.00px;text-align:right;">10</div>
<div class="t" style="top:314.01px;font-size:11.8px;color:#000;-webkit-text-stroke:0.22px #000;right:843.00px;text-align:right;">8</div>
<div class="t" style="top:314.01px;font-size:11.8px;color:#000;-webkit-text-stroke:0.22px #000;right:796.00px;text-align:right;">8</div>
<div class="t" style="top:314.01px;font-size:11.8px;color:#000;-webkit-text-stroke:0.22px #000;right:715.00px;text-align:right;">0</div>
<div class="t" style="top:314.01px;font-size:11.8px;color:#000;-webkit-text-stroke:0.22px #000;right:199.00px;text-align:right;">0</div>
<div class="t" style="top:314.01px;font-size:11.8px;color:#000;-webkit-text-stroke:0.22px #000;right:141.00px;text-align:right;">0</div>
<svg class="r" style="left:983px;top:311px" width="6" height="6" viewBox="0 0 6 6"><path d="M0,0 H6 L0,6 Z" fill="#1e7b34"/></svg>
<div class="t" style="top:331.01px;font-size:11.8px;color:#000;-webkit-text-stroke:0.22px #000;letter-spacing:-0.146px;left:28.30px;">Employee 5</div>
<div class="t" style="top:331.01px;font-size:11.8px;color:#000;-webkit-text-stroke:0.22px #000;right:1050.00px;text-align:right;">7</div>
<div class="t" style="top:331.01px;font-size:11.8px;color:#000;-webkit-text-stroke:0.22px #000;right:995.00px;text-align:right;">10</div>
<div class="t" style="top:331.01px;font-size:11.8px;color:#000;-webkit-text-stroke:0.22px #000;right:900.00px;text-align:right;">9</div>
<div class="t" style="top:331.01px;font-size:11.8px;color:#000;-webkit-text-stroke:0.22px #000;right:843.00px;text-align:right;">9</div>
<div class="t" style="top:331.01px;font-size:11.8px;color:#000;-webkit-text-stroke:0.22px #000;right:796.00px;text-align:right;">8</div>
<div class="t" style="top:331.01px;font-size:11.8px;color:#000;-webkit-text-stroke:0.22px #000;right:715.00px;text-align:right;">0</div>
<div class="t" style="top:331.01px;font-size:11.8px;color:#000;-webkit-text-stroke:0.22px #000;right:199.00px;text-align:right;">0</div>
<div class="t" style="top:331.01px;font-size:11.8px;color:#000;-webkit-text-stroke:0.22px #000;right:141.00px;text-align:right;">0</div>
<svg class="r" style="left:983px;top:328px" width="6" height="6" viewBox="0 0 6 6"><path d="M0,0 H6 L0,6 Z" fill="#1e7b34"/></svg>
<div class="t" style="top:348.01px;font-size:11.8px;color:#000;-webkit-text-stroke:0.22px #000;letter-spacing:-0.146px;left:28.30px;">Employee 6</div>
<div class="t" style="top:348.01px;font-size:11.8px;color:#000;-webkit-text-stroke:0.22px #000;right:1050.00px;text-align:right;">10</div>
<div class="t" style="top:348.01px;font-size:11.8px;color:#000;-webkit-text-stroke:0.22px #000;right:995.00px;text-align:right;">9</div>
<div class="t" style="top:348.01px;font-size:11.8px;color:#000;-webkit-text-stroke:0.22px #000;right:900.00px;text-align:right;">9</div>
<div class="t" style="top:348.01px;font-size:11.8px;color:#000;-webkit-text-stroke:0.22px #000;right:843.00px;text-align:right;">6</div>
<div class="t" style="top:348.01px;font-size:11.8px;color:#000;-webkit-text-stroke:0.22px #000;right:796.00px;text-align:right;">8</div>
<div class="t" style="top:348.01px;font-size:11.8px;color:#000;-webkit-text-stroke:0.22px #000;right:715.00px;text-align:right;">0</div>
<div class="t" style="top:348.01px;font-size:11.8px;color:#000;-webkit-text-stroke:0.22px #000;right:199.00px;text-align:right;">0</div>
<div class="t" style="top:348.01px;font-size:11.8px;color:#000;-webkit-text-stroke:0.22px #000;right:141.00px;text-align:right;">0</div>
<svg class="r" style="left:983px;top:345px" width="6" height="6" viewBox="0 0 6 6"><path d="M0,0 H6 L0,6 Z" fill="#1e7b34"/></svg>
<div class="t" style="top:365.01px;font-size:11.8px;color:#000;-webkit-text-stroke:0.22px #000;letter-spacing:0.286px;left:28.30px;">Total Assignment</div>
<div class="t" style="top:382.01px;font-size:11.8px;color:#000;-webkit-text-stroke:0.22px #000;letter-spacing:0.366px;left:28.30px;">Skills level Total</div>
<div class="t" style="top:365.01px;font-size:11.8px;color:#000;-webkit-text-stroke:0.22px #000;right:659.00px;text-align:right;">0</div>
<div class="t" style="top:382.01px;font-size:11.8px;color:#000;-webkit-text-stroke:0.22px #000;right:659.00px;text-align:right;">0</div>
<div class="t" style="top:365.01px;font-size:11.8px;color:#000;-webkit-text-stroke:0.22px #000;right:604.00px;text-align:right;">0</div>
<div class="t" style="top:382.01px;font-size:11.8px;color:#000;-webkit-text-stroke:0.22px #000;right:604.00px;text-align:right;">0</div>
<div class="t" style="top:365.01px;font-size:11.8px;color:#000;-webkit-text-stroke:0.22px #000;right:523.00px;text-align:right;">0</div>
<div class="t" style="top:382.01px;font-size:11.8px;color:#000;-webkit-text-stroke:0.22px #000;right:523.00px;text-align:right;">0</div>
<div class="t" style="top:365.01px;font-size:11.8px;color:#000;-webkit-text-stroke:0.22px #000;right:466.00px;text-align:right;">0</div>
<div class="t" style="top:382.01px;font-size:11.8px;color:#000;-webkit-text-stroke:0.22px #000;right:466.00px;text-align:right;">0</div>
<div class="t" style="top:365.01px;font-size:11.8px;color:#000;-webkit-text-stroke:0.22px #000;right:419.00px;text-align:right;">0</div>
<div class="t" style="top:382.01px;font-size:11.8px;color:#000;-webkit-text-stroke:0.22px #000;right:419.00px;text-align:right;">0</div>
<div class="t" style="top:365.01px;font-size:11.8px;color:#000;-webkit-text-stroke:0.22px #000;right:330.00px;text-align:right;">0</div>
<div class="t" style="top:382.01px;font-size:11.8px;color:#000;-webkit-text-stroke:0.22px #000;right:330.00px;text-align:right;">0</div>
<div class="t" style="top:365.01px;font-size:11.8px;color:#000;-webkit-text-stroke:0.22px #000;right:199.00px;text-align:right;">0</div>
<div class="t" style="top:382.01px;font-size:11.8px;color:#000;-webkit-text-stroke:0.22px #000;right:141.00px;text-align:right;">0</div>
<div class="t" style="top:416.27px;font-size:11.5px;color:#000;font-weight:bold;letter-spacing:-0.220px;left:28.30px;">Constraints</div>
<div class="t" style="top:433.01px;font-size:11.8px;color:#000;-webkit-text-stroke:0.22px #000;letter-spacing:-0.020px;left:28.30px;">Number Assigned (B3:G8)</div>
<div class="t" style="top:433.01px;font-size:11.8px;color:#000;-webkit-text-stroke:0.22px #000;letter-spacing:0.576px;left:206.50px;">bin</div>
<div class="t" style="top:433.01px;font-size:11.8px;color:#000;-webkit-text-stroke:0.22px #000;letter-spacing:0.872px;left:264.50px;">binary</div>
<div class="t" style="top:450.01px;font-size:11.8px;color:#000;-webkit-text-stroke:0.22px #000;letter-spacing:0.118px;left:28.30px;">Number of assignments (N3:N8)</div>
<div class="t" style="top:450.01px;font-size:11.8px;color:#000;-webkit-text-stroke:0.22px #000;left:206.50px;">=</div>
<div class="t" style="top:450.01px;font-size:11.8px;color:#000;-webkit-text-stroke:0.22px #000;right:995.00px;text-align:right;">1</div>
<div class="t" style="top:467.01px;font-size:11.8px;color:#000;-webkit-text-stroke:0.22px #000;letter-spacing:0.243px;left:28.30px;">Total Assignments</div>
<div class="t" style="top:467.01px;font-size:11.8px;color:#000;-webkit-text-stroke:0.22px #000;left:206.50px;">=</div>
<div class="t" style="top:467.01px;font-size:11.8px;color:#000;-webkit-text-stroke:0.22px #000;right:995.00px;text-align:right;">6</div>
<div class="t" style="white-space:pre;top:540.22px;left:28.10px;font-size:12.5px;color:#000;-webkit-text-stroke:0.22px #000;letter-spacing:0.057px">As the Human Resources Manager, you need to identify the most effective way to assign 6 new employees to 5 positions within the organization. You have a shortage of open positions and must determine</div>
<div class="t" style="white-space:pre;top:559.12px;left:31.50px;font-size:12.5px;color:#000;-webkit-text-stroke:0.22px #000;letter-spacing:0.046px">which employee will be unassigned for the week.  This employee will be sent to skills training instead.  You are given ratings for the employees based on a trial week rating from managers in the respective</div>
<div class="t" style="white-space:pre;top:578.12px;left:36.40px;font-size:12.5px;color:#000;-webkit-text-stroke:0.22px #000;letter-spacing:-0.016px">departments.  The ratings are on a 1-10 scale with 10 being the best score.  Employees will be assigned to one unique position since all work happens simultaneously. Your goal is to maximize skill level as</div>
<div class="t" style="white-space:pre;top:597.02px;left:526.50px;font-size:12.5px;color:#000;-webkit-text-stroke:0.22px #000;letter-spacing:-0.140px">you assign the work tasks.</div>
<div class="t" style="top:618.72px;font-size:12.5px;color:#000;-webkit-text-stroke:0.22px #000;letter-spacing:0.035px;left:28.40px;">Complete the model above by adding necessary formulas and populate the constraints table.</div>
<div class="t" style="top:635.72px;font-size:12.5px;color:#000;-webkit-text-stroke:0.22px #000;left:28.40px;">Create a solver model that prescribes best employee assignments based on skills and determines which employee will be sent for skills training due to the shortage in positions this week.</div>
</body></html>
